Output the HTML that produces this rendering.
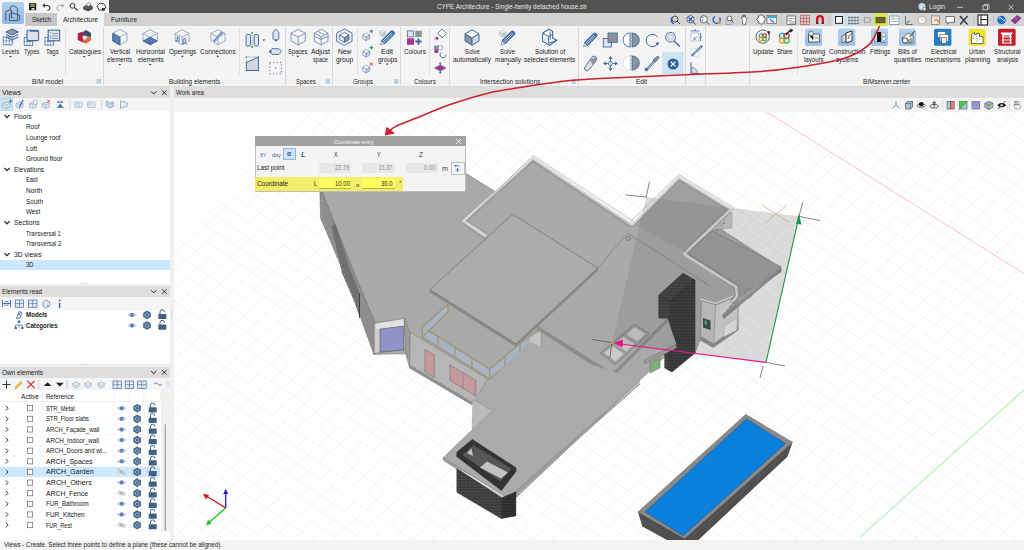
<!DOCTYPE html>
<html><head><meta charset="utf-8">
<style>
*{margin:0;padding:0;box-sizing:border-box}
html,body{width:1024px;height:550px;overflow:hidden;background:#f0f0f0;font-family:"Liberation Sans",sans-serif;font-size:7px;color:#222}
.a{position:absolute}
.t{position:absolute;white-space:nowrap;line-height:10px;height:10px;font-size:7px;color:#1c1c1c}
svg{position:absolute;overflow:visible}
</style></head><body>
<!-- TITLE -->
<div class="a" style="left:0;top:0;width:1024px;height:13.5px;background:#525252"></div>
<div class="a" style="left:0;top:0;width:26px;height:27px;background:#f6f6f6;border-right:1px solid #d6d6d6"></div>
<div class="a" style="left:2px;top:2px;width:22px;height:22px;background:linear-gradient(#b3d0ef,#8fb8e6);border-radius:2px"></div>
<div class="a" style="left:25px;top:0;width:84px;height:13px;background:#f4f4f4"></div>
<div class="t" style="left: 437px; top: 2px; color: rgb(230, 230, 230); transform: scaleX(0.905); transform-origin: left center;">CYPE Architecture - Single-family detached house.str</div>
<div class="t" style="left: 929px; top: 2px; color: rgb(230, 230, 230); font-size: 7.5px; transform: scaleX(0.871); transform-origin: left center;">Login</div>
<!-- TABS -->
<div class="a" style="left:25px;top:13px;width:999px;height:13px;background:#d3d3d3"></div>
<div class="a" style="left:26px;top:13px;width:31px;height:13px;background:#c6c6c6"></div>
<div class="a" style="left:57px;top:13px;width:47px;height:14px;background:#f4f4f4"></div>
<div class="t" style="left: 31.5px; top: 15px; transform: scaleX(0.888); transform-origin: left center;">Sketch</div>
<div class="t" style="left: 63px; top: 15px; transform: scaleX(0.937); transform-origin: left center;">Architecture</div>
<div class="t" style="left: 110.5px; top: 15px; transform: scaleX(0.928); transform-origin: left center;">Furniture</div>
<!--CHROME_SVG--><svg style="left:0;top:0" width="1024" height="30"><path d="M5.8,20.5 V11.5 L10.3,9.8 V7 Q12.8,4.3 15.5,7 L17.6,8.5 V14.5 L19.6,15.5 V20.5 M9.4,20.5 V14.3 L12.5,13 L17.6,14.5 M9.4,20.5 H17.6 V14.5 M11.4,10.5 V17.5 H13.2 M10.3,9.8 L12.6,11.3" fill="none" stroke="#353a42" stroke-width="0.75" stroke-linejoin="round"></path><rect x="29" y="3.2" width="7.2" height="7" fill="#1b1b1b"></rect><rect x="30.3" y="4" width="4.6" height="3" fill="#8a8a3a"></rect><rect x="31.5" y="8" width="3" height="1.8" fill="#ddd"></rect><path d="M43.5,5.5 h3.5 q3,0 3,2.5 q0,2.3 -2.5,2.3" fill="none" stroke="#222" stroke-width="1"></path><path d="M42.3,5.5 L45,3.3 L45,7.7 Z" fill="#222"></path><path d="M63.3,5.5 h-3.5 q-3,0 -3,2.5 q0,2.3 2.5,2.3" fill="none" stroke="#aaa" stroke-width="1"></path><path d="M64.5,5.5 L61.8,3.3 L61.8,7.7 Z" fill="#aaa"></path><circle cx="72.5" cy="5.8" r="2.4" fill="none" stroke="#222" stroke-width="0.9"></circle><path d="M74.3,7.6 L77.8,10.3" stroke="#222" stroke-width="1.1"></path><path d="M83.5,7 L88,4.5 L92.3,6.5 L92.3,9 L88,11 L83.5,9 Z" fill="#555" stroke="#222" stroke-width="0.6"></path><path d="M86,5 L89,2.5 L91,4 L88.5,6.5 Z" fill="#fff" stroke="#333" stroke-width="0.5"></path><circle cx="86.5" cy="6.8" r="0.7" fill="#3a3"></circle><circle cx="88" cy="6.5" r="0.7" fill="#d33"></circle><path d="M97,6 L100,3 L104,4 L106,7 L104,10 L99,10 Z" fill="#fff" stroke="#222" stroke-width="0.9"></path><path d="M102,8 L105,8 L105,10.5 L102,10.5 Z" fill="#333"></path><circle cx="922" cy="6.6" r="3.6" fill="#b9d3ea"></circle><path d="M920,4.5 q2,1 1,3 q2,0 3,2" stroke="#fff" stroke-width="0.7" fill="none"></path><circle cx="924.4" cy="9" r="1.8" fill="#ddd" stroke="#4b4b4b" stroke-width="0.5"></circle><path d="M957,7.3 h6" stroke="#ddd" stroke-width="0.8"></path><rect x="983" y="5.3" width="4.6" height="4.4" fill="none" stroke="#ddd" stroke-width="0.8"></rect><path d="M984.5,5.3 v-1 h4.5 v4.5 h-1.3" fill="none" stroke="#ddd" stroke-width="0.7"></path><path d="M1008.5,4.8 l5,4.9 M1013.5,4.8 l-5,4.9" stroke="#e6e6e6" stroke-width="0.8"></path><rect x="832.6" y="13.5" width="12.699999999999932" height="12.5" fill="#d5e6f5"></rect><rect x="847" y="13.5" width="12.5" height="12.5" fill="#d5e6f5"></rect><rect x="874" y="13.5" width="13" height="12.5" fill="#d6e64a"></rect><rect x="888" y="13.5" width="12.5" height="12.5" fill="#d5e6f5"></rect><line x1="781" y1="14.5" x2="781" y2="25" stroke="#bdbdbd" stroke-width="0.7"></line><line x1="829.3" y1="14.5" x2="829.3" y2="25" stroke="#bdbdbd" stroke-width="0.7"></line><line x1="974" y1="14.5" x2="974" y2="25" stroke="#bdbdbd" stroke-width="0.7"></line><line x1="993.6" y1="14.5" x2="993.6" y2="25" stroke="#bdbdbd" stroke-width="0.7"></line><circle cx="675" cy="19" r="3" fill="none" stroke="#444" stroke-width="0.9"></circle><path d="M677,21 l3,3" stroke="#444" stroke-width="1"></path><path d="M671.5,17.5 q-1,5 2.5,6.5" stroke="#1f4fd8" stroke-width="1.3" fill="none"></path><circle cx="690.5" cy="19.3" r="3.6" fill="#fff" stroke="#444" stroke-width="0.8"></circle><path d="M688.5,17.3 l4,4 M692.5,17.3 l-4,4" stroke="#1f4fd8" stroke-width="1.4"></path><path d="M693,22 l2.5,2.5" stroke="#444" stroke-width="1"></path><circle cx="703.8" cy="19.3" r="3.6" fill="#fff" stroke="#444" stroke-width="0.8"></circle><text x="701.2" y="21.3" font-size="4.5" fill="#1f4fd8" font-family="Liberation Sans">2</text><path d="M706.5,22 l2.5,2.5" stroke="#444" stroke-width="1"></path><path d="M715,16.5 a3.6,3.6 0 1 0 4.5,1" fill="none" stroke="#1f4fd8" stroke-width="1.3"></path><circle cx="719.5" cy="22.5" r="1.6" fill="#e0a020"></circle><rect x="726" y="19" width="6" height="5.5" fill="none" stroke="#7a8fd0" stroke-width="0.6"></rect><circle cx="729.5" cy="18.5" r="2.4" fill="#fff" stroke="#444" stroke-width="0.8"></circle><path d="M731,20 l2.5,2.5" stroke="#444" stroke-width="1"></path><path d="M742.5,24 v-4 l-1,-2 v-1 l1,0.5 v-2.5 h1 v2 h1 v-2 h1 v2.5 h1 v3.5 l-1,1.5 v2 z" fill="#fff" stroke="#555" stroke-width="0.7"></path><path d="M756.3,19.5 l2,-1.5 v-2 h1.5 l1.5,-1.5 l1.5,1.5 h1.5 v2 l2,1.5 l-2,1.5 v2 h-1.5 l-1.5,1.5 l-1.5,-1.5 h-1.5 v-2 z" fill="#fff" stroke="#444" stroke-width="0.8"></path><rect x="767" y="15.5" width="9.5" height="8" fill="#fff" stroke="#444" stroke-width="0.6"></rect><rect x="767.5" y="16" width="8.5" height="2.3" fill="#39b0d8"></rect><path d="M770,19.5 l4,3" stroke="#1f4fd8" stroke-width="1.2"></path><rect x="787" y="16" width="8.5" height="8.5" fill="#fff" stroke="#444" stroke-width="0.7"></rect><path d="M788,18.5 h6.5 M788,20.5 h3" stroke="#444" stroke-width="0.5"></path><text x="789.5" y="23.8" font-size="3.5" fill="#333" font-family="Liberation Sans">DG</text><rect x="800.5" y="15.5" width="9" height="9" fill="none" stroke="#a33" stroke-width="0.8" stroke-dasharray="1.3,0.7"></rect><path d="M800.5,18.5 h9 M800.5,21.5 h9 M803.5,15.5 v9 M806.5,15.5 v9" stroke="#c33" stroke-width="0.6"></path><path d="M816,24 v-5 a4,4 0 0 1 8,0 v5 h-2.3 v-5 a1.7,1.7 0 0 0 -3.4,0 v5 z" fill="#c8161e"></path><rect x="816" y="22.5" width="2.3" height="1.5" fill="#333"></rect><rect x="821.7" y="22.5" width="2.3" height="1.5" fill="#333"></rect><rect x="835.5" y="16.5" width="7" height="6.8" fill="#fff" stroke="#222" stroke-width="1"></rect><path d="M849,16 v9 M852,16 v9 M855,16 v9 M858,16 v9 M848,17.5 h11 M848,20.5 h11 M848,23.5 h11" stroke="#555" stroke-width="0.6"></path><rect x="864.5" y="17.5" width="5.5" height="5" fill="none" stroke="#888" stroke-width="0.6"></rect><path d="M863,20 h1.5 M870,20 h1.5" stroke="#888" stroke-width="0.6"></path><rect x="876" y="17.3" width="9" height="5.5" fill="#7a7a20" stroke="#333" stroke-width="0.7"></rect><path d="M877,19 h7 M877,21 h7" stroke="#222" stroke-width="0.4"></path><rect x="889.5" y="16" width="9.5" height="8.5" fill="#fff" stroke="#666" stroke-width="0.6"></rect><path d="M890.5,19 h7.5 M890.5,21.5 h7.5 M893,16.5 v3" stroke="#666" stroke-width="0.5"></path><path d="M905.5,16 v8.5 h7 M905.5,24.5 l0,0 M907,24 a3,3 0 0 1 3,-3" fill="none" stroke="#555" stroke-width="0.8"></path><circle cx="922" cy="20" r="3.8" fill="#fff" stroke="#999" stroke-width="0.7"></circle><path d="M922,17.5 v2.5 h2" stroke="#999" stroke-width="0.6" fill="none"></path><rect x="931.5" y="15.5" width="8" height="9" fill="#f7e6d6" stroke="#777" stroke-width="0.7"></rect><rect x="932" y="15.5" width="7" height="2" fill="#ccc"></rect><path d="M934,20 h4 v3" stroke="#e36a2a" stroke-width="1" fill="none"></path><path d="M946,16.5 h8.5 v6 h-5 l-2,2 v-2 h-1.5 z" fill="#fff" stroke="#555" stroke-width="0.8"></path><path d="M960,16 l7.5,8.5 M967.5,16 l-7.5,8.5" stroke="#333" stroke-width="1.3"></path><path d="M959.5,16 l2,0 l-1,1.5 z" fill="#333"></path><rect x="978" y="15" width="9.5" height="10" fill="#fff" stroke="#222" stroke-width="1.1"></rect><path d="M981,15 v10 M981,19.5 h6.5" stroke="#222" stroke-width="1.1"></path><path d="M988,20 h1.5" stroke="#999" stroke-width="0.6"></path><circle cx="1001.5" cy="20" r="4.3" fill="#1f6fd0"></circle><path d="M999,18 q2,-1 3,1 q1,2 3,1" stroke="#fff" stroke-width="1" fill="none"></path><path d="M1006.5,20 h1" stroke="#999" stroke-width="0.6"></path><path d="M1011,21 L1017,15.5 L1021,18 L1015,24 Z" fill="#8a3aa0" stroke="#5a2070" stroke-width="0.6"></path><path d="M1011,21 L1015,24 L1015,25 L1011,22 Z" fill="#ddd"></path><path d="M1015,18 l2,1" stroke="#e8c21a" stroke-width="0.8"></path></svg>
<!-- RIBBON -->
<div class="a" style="left:0;top:26px;width:1024px;height:61px;background:#f4f4f4;border-bottom:1px solid #d9d9d9"></div>
<div class="t" style="left: 1.9px; top: 47px; transform: scaleX(0.845); transform-origin: left center;">Levels</div>
<div class="t" style="left: 23.5px; top: 47px; transform: scaleX(0.813); transform-origin: left center;">Types</div>
<div class="t" style="left: 45.7px; top: 47px; transform: scaleX(0.858); transform-origin: left center;">Tags</div>
<div class="t" style="left: 68.5px; top: 47px; transform: scaleX(0.898); transform-origin: left center;">Catalogues</div>
<div class="t" style="left: 31.7px; top: 77px; transform: scaleX(0.929); transform-origin: left center;">BIM model</div>
<div class="t" style="left: 109.7px; top: 47px; transform: scaleX(0.871); transform-origin: left center;">Vertical</div>
<div class="t" style="left: 107px; top: 55px; transform: scaleX(0.88); transform-origin: left center;">elements</div>
<div class="t" style="left: 136px; top: 47px; transform: scaleX(0.92); transform-origin: left center;">Horizontal</div>
<div class="t" style="left: 137.5px; top: 55px; transform: scaleX(0.908); transform-origin: left center;">elements</div>
<div class="t" style="left: 168.7px; top: 47px; transform: scaleX(0.911); transform-origin: left center;">Openings</div>
<div class="t" style="left: 200px; top: 47px; transform: scaleX(0.915); transform-origin: left center;">Connections</div>
<div class="t" style="left: 168.7px; top: 77px; transform: scaleX(0.928); transform-origin: left center;">Building elements</div>
<div class="t" style="left: 288px; top: 47px; transform: scaleX(0.835); transform-origin: left center;">Spaces</div>
<div class="t" style="left: 311px; top: 47px; transform: scaleX(0.976); transform-origin: left center;">Adjust</div>
<div class="t" style="left: 313px; top: 55px; transform: scaleX(0.803); transform-origin: left center;">space</div>
<div class="t" style="left: 295.5px; top: 77px; transform: scaleX(0.848); transform-origin: left center;">Spaces</div>
<div class="t" style="left: 337.5px; top: 47px; transform: scaleX(0.963); transform-origin: left center;">New</div>
<div class="t" style="left: 335.6px; top: 55px; transform: scaleX(0.972); transform-origin: left center;">group</div>
<div class="t" style="left: 381px; top: 47px; transform: scaleX(0.995); transform-origin: left center;">Edit</div>
<div class="t" style="left: 377.5px; top: 55px; transform: scaleX(0.911); transform-origin: left center;">groups</div>
<div class="t" style="left: 352.8px; top: 77px; transform: scaleX(0.879); transform-origin: left center;">Groups</div>
<div class="t" style="left: 403.8px; top: 47px; transform: scaleX(0.904); transform-origin: left center;">Colours</div>
<div class="t" style="left: 413.8px; top: 77px; transform: scaleX(0.904); transform-origin: left center;">Colours</div>
<div class="t" style="left: 464.7px; top: 47px; transform: scaleX(0.839); transform-origin: left center;">Solve</div>
<div class="t" style="left: 452.8px; top: 55px; transform: scaleX(0.93); transform-origin: left center;">automatically</div>
<div class="t" style="left: 500px; top: 47px; transform: scaleX(0.856); transform-origin: left center;">Solve</div>
<div class="t" style="left: 495px; top: 55px; transform: scaleX(0.928); transform-origin: left center;">manually</div>
<div class="t" style="left: 479.8px; top: 77px; transform: scaleX(0.915); transform-origin: left center;">Intersection solutions</div>
<div class="t" style="left: 534.7px; top: 47px; transform: scaleX(0.916); transform-origin: left center;">Solution of</div>
<div class="t" style="left: 524px; top: 55px; transform: scaleX(0.909); transform-origin: left center;">selected elements</div>
<div class="t" style="left: 636px; top: 77px; transform: scaleX(0.912); transform-origin: left center;">Edit</div>
<div class="t" style="left: 752.6px; top: 47px; transform: scaleX(0.904); transform-origin: left center;">Update</div>
<div class="t" style="left: 777px; top: 47px; transform: scaleX(0.829); transform-origin: left center;">Share</div>
<div class="t" style="left: 801.6px; top: 47px; transform: scaleX(0.911); transform-origin: left center;">Drawing</div>
<div class="t" style="left: 803.5px; top: 55px; transform: scaleX(0.879); transform-origin: left center;">layouts</div>
<div class="t" style="left: 829px; top: 47px; transform: scaleX(0.926); transform-origin: left center;">Construction</div>
<div class="t" style="left: 835.6px; top: 55px; transform: scaleX(0.873); transform-origin: left center;">systems</div>
<div class="t" style="left: 869.5px; top: 47px; transform: scaleX(0.909); transform-origin: left center;">Fittings</div>
<div class="t" style="left: 897.8px; top: 47px; transform: scaleX(0.912); transform-origin: left center;">Bills of</div>
<div class="t" style="left: 893.8px; top: 55px; transform: scaleX(0.921); transform-origin: left center;">quantities</div>
<div class="t" style="left: 930.5px; top: 47px; transform: scaleX(0.898); transform-origin: left center;">Electrical</div>
<div class="t" style="left: 925.4px; top: 55px; transform: scaleX(0.906); transform-origin: left center;">mechanisms</div>
<div class="t" style="left: 969px; top: 47px; transform: scaleX(0.839); transform-origin: left center;">Urban</div>
<div class="t" style="left: 964.6px; top: 55px; transform: scaleX(0.952); transform-origin: left center;">planning</div>
<div class="t" style="left: 993.8px; top: 47px; transform: scaleX(0.891); transform-origin: left center;">Structural</div>
<div class="t" style="left: 996.7px; top: 55px; transform: scaleX(0.842); transform-origin: left center;">analysis</div>
<div class="t" style="left: 862.6px; top: 77px; transform: scaleX(0.896); transform-origin: left center;">BIMserver.center</div>
<!--RIBBON_SVG--><svg style="left:0;top:0" width="1024" height="86"><line x1="103.5" y1="27" x2="103.5" y2="85" stroke="#d9d9d9" stroke-width="1"></line><line x1="285.5" y1="27" x2="285.5" y2="85" stroke="#d9d9d9" stroke-width="1"></line><line x1="332.5" y1="27" x2="332.5" y2="85" stroke="#d9d9d9" stroke-width="1"></line><line x1="400.5" y1="27" x2="400.5" y2="85" stroke="#d9d9d9" stroke-width="1"></line><line x1="449.5" y1="27" x2="449.5" y2="85" stroke="#d9d9d9" stroke-width="1"></line><line x1="578.5" y1="27" x2="578.5" y2="85" stroke="#d9d9d9" stroke-width="1"></line><line x1="685.5" y1="27" x2="685.5" y2="85" stroke="#d9d9d9" stroke-width="1"></line><line x1="705.5" y1="27" x2="705.5" y2="85" stroke="#d9d9d9" stroke-width="1"></line><line x1="749.5" y1="27" x2="749.5" y2="85" stroke="#d9d9d9" stroke-width="1"></line><line x1="65.5" y1="28" x2="65.5" y2="75" stroke="#e0e0e0" stroke-width="1"></line><line x1="239.5" y1="28" x2="239.5" y2="75" stroke="#e0e0e0" stroke-width="1"></line><line x1="357.5" y1="28" x2="357.5" y2="75" stroke="#e0e0e0" stroke-width="1"></line><line x1="429.5" y1="28" x2="429.5" y2="75" stroke="#e0e0e0" stroke-width="1"></line><line x1="797.5" y1="28" x2="797.5" y2="75" stroke="#e0e0e0" stroke-width="1"></line><rect x="96.5" y="79.2" width="4.5" height="4.5" fill="#b9cde3"></rect><rect x="325.6" y="79.2" width="4.5" height="4.5" fill="#b9cde3"></rect><rect x="394" y="79.2" width="4.5" height="4.5" fill="#b9cde3"></rect><rect x="571.4" y="79.2" width="4.5" height="4.5" fill="#b9cde3"></rect><polygon points="9.0,56.0 12.0,56.0 10.5,57.6" fill="#444"></polygon><polygon points="82.7,56.0 85.7,56.0 84.2,57.6" fill="#444"></polygon><polygon points="118.2,63.89999999999999 121.2,63.89999999999999 119.7,65.5" fill="#444"></polygon><polygon points="148.7,63.89999999999999 151.7,63.89999999999999 150.2,65.5" fill="#444"></polygon><polygon points="180.9,55.8 183.9,55.8 182.4,57.4" fill="#444"></polygon><polygon points="216.3,55.8 219.3,55.8 217.8,57.4" fill="#444"></polygon><polygon points="296.2,55.8 299.2,55.8 297.7,57.4" fill="#444"></polygon><polygon points="385.7,63.599999999999994 388.7,63.599999999999994 387.2,65.2" fill="#444"></polygon><polygon points="506.5,63.599999999999994 509.5,63.599999999999994 508,65.2" fill="#444"></polygon><polygon points="262.3,39.5 265.3,39.5 263.8,41.1" fill="#444"></polygon><rect x="3.2" y="37" width="9" height="7.8" fill="#fff" stroke="#3e6aa3" stroke-width="0.8"></rect><line x1="6.2" y1="37" x2="6.2" y2="44.8" stroke="#3e6aa3" stroke-width="0.6"></line><line x1="9.2" y1="37" x2="9.2" y2="44.8" stroke="#3e6aa3" stroke-width="0.6"></line><line x1="3.2" y1="40.9" x2="12.2" y2="40.9" stroke="#3e6aa3" stroke-width="0.6"></line><path d="M12.2,29.1 L18.2,32 L12.2,35 L6.2,32 Z" fill="#9a9a9a" stroke="#3e6aa3" stroke-width="1.1"></path><path d="M6.2,34.5 L12.2,37.5 L18.2,34.5 M6.2,37 L12.2,40 L18.2,37" fill="none" stroke="#3e6aa3" stroke-width="1.1"></path><rect x="24.2" y="37.5" width="8.5" height="8" fill="#fff" stroke="#3e6aa3" stroke-width="0.8"></rect><line x1="27.03333333333333" y1="37.5" x2="27.03333333333333" y2="45.5" stroke="#3e6aa3" stroke-width="0.6"></line><line x1="29.866666666666667" y1="37.5" x2="29.866666666666667" y2="45.5" stroke="#3e6aa3" stroke-width="0.6"></line><line x1="24.2" y1="41.5" x2="32.7" y2="41.5" stroke="#3e6aa3" stroke-width="0.6"></line><rect x="27" y="30.2" width="11.6" height="10.4" rx="1.3" fill="#dde2ea" stroke="#3e6aa3" stroke-width="1.1"></rect><rect x="30" y="30.2" width="8.6" height="1.6" fill="#3e6aa3"></rect><rect x="45" y="37.3" width="8.7" height="7.8" fill="#fff" stroke="#3e6aa3" stroke-width="0.8"></rect><line x1="47.9" y1="37.3" x2="47.9" y2="45.099999999999994" stroke="#3e6aa3" stroke-width="0.6"></line><line x1="50.8" y1="37.3" x2="50.8" y2="45.099999999999994" stroke="#3e6aa3" stroke-width="0.6"></line><line x1="45" y1="41.199999999999996" x2="53.7" y2="41.199999999999996" stroke="#3e6aa3" stroke-width="0.6"></line><rect x="48.2" y="30.2" width="11.4" height="10.6" fill="#e3e7ee" stroke="#3e6aa3" stroke-width="1.1"></rect><path d="M50,32.5 h1 M52,33.5 h6 M52,36 h6 M52,38.5 h6 M50.5,35 v4" stroke="#3e6aa3" stroke-width="0.6"></path><path d="M81,33.2 L86,30 L91,33 L91,37 L86,36.5 L82.8,35.5 Z" fill="#3c4968"></path><path d="M77.8,33.5 L81.5,31.8 L82.8,35 L82.8,42.5 L77.8,40 Z" fill="#b7193f"></path><path d="M83,42.5 L83,39 L86.5,37.3 L91,37.3 L91,40.5 L86,43.8 Z" fill="#d86f3b"></path><circle cx="84.8" cy="37.6" r="2.1" fill="#e6e6e6"></circle><path d="M119.89999999999999,29.4 L127.0,33.3 L127.0,41.1 L119.89999999999999,45.0 L112.8,41.1 L112.8,33.3 Z M112.8,33.3 L119.89999999999999,37.199999999999996 L127.0,33.3 M119.89999999999999,37.199999999999996 L119.89999999999999,45.0" fill="none" stroke="#5b80b3" stroke-width="0.6"></path><path d="M112.8,33.3 L119.89999999999999,37.199999999999996 L119.89999999999999,45.0 L112.8,41.099999999999994 Z" fill="#4a70a5" stroke="#3e6aa3" stroke-width="0.9"></path><path d="M113.8,35.4 L118.8,42.4 M115.8,35.4 L118.8,39.4 M113.8,38.4 L116.8,42.4" stroke="#9fb6d6" stroke-width="0.5"></path><path d="M150.2,29.7 L157.4,33.45 L157.4,40.95 L150.2,44.7 L143,40.95 L143,33.45 Z M143,33.45 L150.2,37.2 L157.4,33.45 M150.2,37.2 L150.2,44.7" fill="none" stroke="#5b80b3" stroke-width="0.6"></path><path d="M143,40.9 L150.2,37.2 L157.4,40.9 L150.2,44.7 Z" fill="#4a70a5" stroke="#3e6aa3" stroke-width="0.8"></path><path d="M147,40.2 L149,42.7 M150,39.2 L152,42.2 M153,40.2 L154,41.7" stroke="#a9bcd9" stroke-width="0.5"></path><path d="M182.2,29.7 L189.2,33.45 L189.2,40.95 L182.2,44.7 L175.2,40.95 L175.2,33.45 Z M175.2,33.45 L182.2,37.2 L189.2,33.45 M182.2,37.2 L182.2,44.7" fill="none" stroke="#5b80b3" stroke-width="0.6"></path><path d="M177.2,36.7 v4 l2,1 v-4 z M185.2,38.2 v5 l-2,1 v-5 z M176.7,40.2 l-1,1.5 M185.7,43.2 l1.5,1.5" fill="none" stroke="#3e6aa3" stroke-width="0.9"></path><path d="M218.0,29.7 L225.1,33.45 L225.1,40.95 L218.0,44.7 L210.9,40.95 L210.9,33.45 Z M210.9,33.45 L218.0,37.2 L225.1,33.45 M218.0,37.2 L218.0,44.7" fill="none" stroke="#5b80b3" stroke-width="0.6"></path><path d="M212.9,40.7 L221.4,31.2 L223.4,32.7 L214.9,42.2 Z" fill="#5a7fb2"></path><path d="M213.9,40.2 L221.9,31.7 M214.9,41.2 L222.9,32.7" stroke="#fff" stroke-width="0.4"></path><rect x="246.1" y="34.5" width="4.3" height="11.4" rx="1" fill="#e3e7ee" stroke="#3e6aa3" stroke-width="1"></rect><rect x="254.2" y="34.5" width="4.3" height="11.4" rx="1" fill="#e3e7ee" stroke="#3e6aa3" stroke-width="1"></rect><line x1="252.2" y1="33" x2="252.2" y2="47" stroke="#3e6aa3" stroke-width="0.6" stroke-dasharray="1,0.8"></line><circle cx="252.2" cy="32.8" r="0.9" fill="#3a9a3a"></circle><circle cx="252.2" cy="47" r="0.9" fill="#3a9a3a"></circle><path d="M246.4,62.5 L258.4,57 L258.4,70.5 L246.4,70.5 Z" fill="#d2d8e2" stroke="#3e6aa3" stroke-width="1"></path><path d="M246.4,57 L258.4,57 M246.4,57 L246.4,62.5" stroke="#3e6aa3" stroke-width="0.6" stroke-dasharray="1,0.7"></path><circle cx="246.4" cy="57" r="0.8" fill="#3a9a3a"></circle><circle cx="258.4" cy="57" r="0.8" fill="#3a9a3a"></circle><circle cx="246.4" cy="62.5" r="0.8" fill="#3a9a3a"></circle><circle cx="246.4" cy="70.5" r="0.8" fill="#3a9a3a"></circle><circle cx="258.4" cy="70.5" r="0.8" fill="#3a9a3a"></circle><path d="M275.9,29.3 L278.8,32 L278.8,39 L275.9,41.1 L273,39 L273,32 Z" fill="#dfe4ec" stroke="#3e6aa3" stroke-width="0.9"></path><circle cx="275.9" cy="40" r="1.1" fill="#3e6aa3"></circle><path d="M269.3,51.5 L272,48.7 L279,48.7 L281.6,51.5 L279,54.4 L272,54.4 Z" fill="#dfe4ec" stroke="#3e6aa3" stroke-width="0.9"></path><circle cx="270.5" cy="51.5" r="1.2" fill="#3e6aa3"></circle><rect x="269.8" y="62.5" width="11.8" height="11.3" fill="none" stroke="#3e6aa3" stroke-width="0.9" stroke-dasharray="1.2,2.2"></rect><circle cx="275.7" cy="68" r="0.7" fill="#3e6aa3"></circle><path d="M298.15,29.3 L305.3,33.2 L305.3,41.0 L298.15,44.9 L291,41.0 L291,33.2 Z M291,33.2 L298.15,37.1 L305.3,33.2 M298.15,37.1 L298.15,44.9" fill="none" stroke="#5b80b3" stroke-width="0.8"></path><path d="M321.15000000000003,29.3 L328.0,33.2 L328.0,41.0 L321.15000000000003,44.9 L314.3,41.0 L314.3,33.2 Z M314.3,33.2 L321.15000000000003,37.1 L328.0,33.2 M321.15000000000003,37.1 L321.15000000000003,44.9" fill="none" stroke="#5b80b3" stroke-width="0.8"></path><path d="M314.8,36.5 L321,39.5 L327.5,36.5 M318,31.5 L324,34.5" stroke="#5b80b3" stroke-width="0.8" fill="none"></path><path d="M344.4,29 L352,33 L352,41.4 L344.4,45.3 L336.7,41.4 L336.7,33 Z" fill="#eef1f5" stroke="#3e6aa3" stroke-width="0.9"></path><polygon points="344.40000000000003,32.3 349.0,35.032399999999996 344.40000000000003,37.764799999999994 339.8,35.032399999999996" fill="#fff" stroke="#3e6aa3" stroke-width="0.9" stroke-linejoin="round"></polygon><polygon points="339.8,35.032399999999996 344.40000000000003,37.764799999999994 344.40000000000003,42.419999999999995 339.8,39.687599999999996" fill="#fff" stroke="#3e6aa3" stroke-width="0.9" stroke-linejoin="round"></polygon><polygon points="344.40000000000003,37.764799999999994 349.0,35.032399999999996 349.0,39.687599999999996 344.40000000000003,42.419999999999995" fill="#8e9299" stroke="#3e6aa3" stroke-width="0.9" stroke-linejoin="round"></polygon><polygon points="366.2,33 369.7,35.079 366.2,37.158 362.7,35.079" fill="#fff" stroke="#6f8fbd" stroke-width="0.7" stroke-linejoin="round"></polygon><polygon points="362.7,35.079 366.2,37.158 366.2,40.7 362.7,38.621" fill="#f3f5f8" stroke="#6f8fbd" stroke-width="0.7" stroke-linejoin="round"></polygon><polygon points="366.2,37.158 369.7,35.079 369.7,38.621 366.2,40.7" fill="#c9d1dd" stroke="#6f8fbd" stroke-width="0.7" stroke-linejoin="round"></polygon><polygon points="366.2,49.4 369.7,51.479 366.2,53.558 362.7,51.479" fill="#fff" stroke="#6f8fbd" stroke-width="0.7" stroke-linejoin="round"></polygon><polygon points="362.7,51.479 366.2,53.558 366.2,57.1 362.7,55.021" fill="#f3f5f8" stroke="#6f8fbd" stroke-width="0.7" stroke-linejoin="round"></polygon><polygon points="366.2,53.558 369.7,51.479 369.7,55.021 366.2,57.1" fill="#c9d1dd" stroke="#6f8fbd" stroke-width="0.7" stroke-linejoin="round"></polygon><polygon points="366.2,65.3 369.7,67.37899999999999 366.2,69.458 362.7,67.37899999999999" fill="#fff" stroke="#6f8fbd" stroke-width="0.7" stroke-linejoin="round"></polygon><polygon points="362.7,67.37899999999999 366.2,69.458 366.2,73.0 362.7,70.92099999999999" fill="#f3f5f8" stroke="#6f8fbd" stroke-width="0.7" stroke-linejoin="round"></polygon><polygon points="366.2,69.458 369.7,67.37899999999999 369.7,70.92099999999999 366.2,73.0" fill="#c9d1dd" stroke="#6f8fbd" stroke-width="0.7" stroke-linejoin="round"></polygon><path d="M371.3,29.5 v3.6 M369.5,31.3 h3.6 M370,30 l2.6,2.6 M372.6,30 l-2.6,2.6" stroke="#3e6aa3" stroke-width="0.7"></path><path d="M371.4,45.8 v3.8 M369.5,47.7 h3.8" stroke="#2faa3a" stroke-width="1.3"></path><path d="M369.9,62.5 l3,3 M372.9,62.5 l-3,3" stroke="#d9262e" stroke-width="1"></path><polygon points="382.5,30 385.5,31.782 382.5,33.564 379.5,31.782" fill="#eee" stroke="#b7bcc4" stroke-width="0.6" stroke-linejoin="round"></polygon><polygon points="379.5,31.782 382.5,33.564 382.5,36.6 379.5,34.818" fill="#ddd" stroke="#b7bcc4" stroke-width="0.6" stroke-linejoin="round"></polygon><polygon points="382.5,33.564 385.5,31.782 385.5,34.818 382.5,36.6" fill="#c6c6c6" stroke="#b7bcc4" stroke-width="0.6" stroke-linejoin="round"></polygon><g transform="translate(379.5,29.8) scale(1.0)"><path d="M0.8,15.2 L2,10.2 L11.2,1 Q12.6,-0.2 14,1.1 L15,2 Q16.2,3.4 15,4.8 L5.8,14 Z" fill="#3e6aa3"></path><path d="M3.2,11.6 L12,2.8 M4.4,12.8 L13.2,4" stroke="#f4f4f4" stroke-width="0.8"></path><path d="M1.6,14.4 L2.3,11.6 L4.4,13.7 Z" fill="#f4f4f4"></path></g><rect x="407.3" y="30.9" width="6.3" height="6" fill="#dfe3ea" stroke="#3e6aa3" stroke-width="0.8"></rect><rect x="415.2" y="30.7" width="6.6" height="6.4" fill="#8e9299"></rect><rect x="407" y="38.3" width="7" height="6.5" fill="#a8358f"></rect><path d="M418.5,38.5 v6.3 M415.3,41.6 h6.4" stroke="#3e6aa3" stroke-width="2"></path><path d="M438,33 L442,29 L446.3,33.5 L442,38 Z" fill="#fff" stroke="#3e6aa3" stroke-width="0.8"></path><path d="M434.5,35 h4 v5.5 h-4 z" fill="#fff" stroke="#cdd3dc" stroke-width="0.5"></path><circle cx="436.8" cy="38.3" r="1.5" fill="#a8358f"></circle><rect x="434.5" y="46" width="3.8" height="3.5" fill="#8e9299" stroke="#3e6aa3" stroke-width="0.5"></rect><rect x="438.4" y="46" width="3.8" height="3.5" fill="#fff" stroke="#3e6aa3" stroke-width="0.5"></rect><rect x="434.5" y="49.5" width="3.8" height="3.5" fill="#a8358f"></rect><path d="M441,52.5 a3,3 0 1 0 5,2.5" fill="none" stroke="#3e6aa3" stroke-width="1"></path><path d="M440.3,63 v10" stroke="#3e6aa3" stroke-width="0.8"></path><path d="M434.5,68 L440.3,65 L446,68 L440.3,71 Z" fill="#a8358f" stroke="#3e6aa3" stroke-width="0.6"></path><circle cx="440.3" cy="63.5" r="1" fill="#3e6aa3"></circle><circle cx="440.3" cy="72.5" r="1" fill="#3e6aa3"></circle><polygon points="472.0,29.75 479,33.908 472.0,38.066 465,33.908" fill="#fff" stroke="#3e6aa3" stroke-width="1" stroke-linejoin="round"></polygon><polygon points="465,33.908 472.0,38.066 472.0,45.150000000000006 465,40.992000000000004" fill="#8e9299" stroke="#3e6aa3" stroke-width="1" stroke-linejoin="round"></polygon><polygon points="472.0,38.066 479,33.908 479,40.992000000000004 472.0,45.150000000000006" fill="#d5d9e0" stroke="#3e6aa3" stroke-width="1" stroke-linejoin="round"></polygon><polygon points="502.75,30 506.0,31.930500000000002 502.75,33.861000000000004 499.5,31.930500000000002" fill="#f2f2f2" stroke="#b9bec6" stroke-width="0.6" stroke-linejoin="round"></polygon><polygon points="499.5,31.930500000000002 502.75,33.861000000000004 502.75,37.15 499.5,35.2195" fill="#ddd" stroke="#b9bec6" stroke-width="0.6" stroke-linejoin="round"></polygon><polygon points="502.75,33.861000000000004 506.0,31.930500000000002 506.0,35.2195 502.75,37.15" fill="#c8c8c8" stroke="#b9bec6" stroke-width="0.6" stroke-linejoin="round"></polygon><g transform="translate(500,30) scale(0.9875)"><path d="M0.8,15.2 L2,10.2 L11.2,1 Q12.6,-0.2 14,1.1 L15,2 Q16.2,3.4 15,4.8 L5.8,14 Z" fill="#3e6aa3"></path><path d="M3.2,11.6 L12,2.8 M4.4,12.8 L13.2,4" stroke="#f4f4f4" stroke-width="0.8"></path><path d="M1.6,14.4 L2.3,11.6 L4.4,13.7 Z" fill="#f4f4f4"></path></g><path d="M548.6,29.3 L552.6,31.3 L552.6,38.3 L557.0,40.3 L549.6,45.3 L542.6,41.3 L542.6,33.3 Z" fill="#fff" stroke="#3e6aa3" stroke-width="1.1" stroke-linejoin="round"></path><path d="M542.6,33.3 L548.6,36.3 L548.6,43.3 M548.6,36.3 L552.6,34.3 M548.6,43.3 L557.0,40.3 M550.1,31.8 v8" fill="none" stroke="#3e6aa3" stroke-width="1"></path><path d="M543.6,36.3 L547.6,38.3 L547.6,42.3 L543.6,40.3 Z" fill="#e6ebf2"></path><rect x="663" y="52.9" width="20" height="20.6" fill="#cfe3f6" stroke="#b5d3ef" stroke-width="0.6"></rect><g transform="translate(582.5,32.2) scale(0.96875)"><path d="M0.8,15.2 L2,10.2 L11.2,1 Q12.6,-0.2 14,1.1 L15,2 Q16.2,3.4 15,4.8 L5.8,14 Z" fill="#3e6aa3"></path><path d="M3.2,11.6 L12,2.8 M4.4,12.8 L13.2,4" stroke="#f4f4f4" stroke-width="0.8"></path><path d="M1.6,14.4 L2.3,11.6 L4.4,13.7 Z" fill="#f4f4f4"></path></g><rect x="603.3" y="38.5" width="8" height="8.5" fill="#dfe3ea" stroke="#3e6aa3" stroke-width="0.9"></rect><rect x="608" y="33" width="9.3" height="9.3" fill="#8e9299" stroke="#3e6aa3" stroke-width="0.9"></rect><path d="M630,33 a7,7 0 0 0 0,14 z" fill="#fff" stroke="#3e6aa3" stroke-width="0.9"></path><path d="M632.3,33 a7,7 0 0 1 0,14 z" fill="#8e9299" stroke="#3e6aa3" stroke-width="0.9"></path><line x1="631.2" y1="32" x2="631.2" y2="48" stroke="#3e6aa3" stroke-width="0.6" stroke-dasharray="1,0.6"></line><path d="M657.5,37 A6.2,6.2 0 1 0 658,43" fill="none" stroke="#3e6aa3" stroke-width="1"></path><path d="M655.5,42.5 L659.5,42.5 L657.5,46 Z" fill="#3e6aa3"></path><circle cx="670.6" cy="37.3" r="4.8" fill="#fff" stroke="#3e6aa3" stroke-width="1"></circle><circle cx="670.6" cy="37.3" r="3" fill="#e4e7ec" stroke="#8e9299" stroke-width="0.5"></circle><path d="M674,41 L679.8,46.5" stroke="#3e6aa3" stroke-width="1.6"></path><path d="M584.5,68 L592,57 Q594,55 596,57 Q597.5,59 596,61 L588.5,70.5 Q586.5,71.5 585,70 Z" fill="#dfe3ea" stroke="#3e6aa3" stroke-width="0.9"></path><path d="M590,60 L595.5,57 L596.5,60.5 L592.5,64.5 Z" fill="#8e9299"></path><path d="M610.5,56 L608.5,59 h4 z M610.5,71 L608.5,68 h4 z M603,63.5 L606,61.5 v4 z M618,63.5 L615,61.5 v4 z" fill="#3e6aa3"></path><path d="M610.5,58 v11 M605,63.5 h11" stroke="#3e6aa3" stroke-width="0.9"></path><circle cx="610.5" cy="63.5" r="2" fill="#e3e7ee" stroke="#3e6aa3" stroke-width="0.8"></circle><path d="M630,56 a7,7 0 0 0 0,14 z" fill="#fff" stroke="#9aaac2" stroke-width="0.6" stroke-dasharray="0.8,0.6"></path><path d="M632.3,56 a7,7 0 0 1 0,14 z" fill="#8e9299" stroke="#3e6aa3" stroke-width="0.9"></path><line x1="631.2" y1="55" x2="631.2" y2="71" stroke="#3e6aa3" stroke-width="0.6" stroke-dasharray="1,0.6"></line><path d="M646.5,70 L654.5,61 M646.5,70 L645.8,69" stroke="#3e6aa3" stroke-width="2.4" stroke-linecap="round"></path><path d="M647.5,69 L654,61.8" stroke="#fff" stroke-width="0.8"></path><path d="M653,60 L657,56.5 Q659,56 659,58 L655.5,62 Z" fill="#8e9299" stroke="#3e6aa3" stroke-width="0.8"></path><circle cx="673.1" cy="64" r="5.6" fill="#2e5e9c"></circle><path d="M670.7,61.6 l4.8,4.8 M675.5,61.6 l-4.8,4.8" stroke="#fff" stroke-width="1.3"></path><rect x="691" y="33" width="8" height="8" fill="#fff" stroke="#9fb3cf" stroke-width="0.7"></rect><path d="M690.5,31 h9 M695,29 v2 M700.5,33 v8 M700.5,37 h1.5" stroke="#3e6aa3" stroke-width="0.8"></path><text x="693" y="39.5" font-size="5" fill="#3e6aa3" font-family="Liberation Sans">a°</text><rect x="691" y="49" width="7.5" height="7.5" fill="#fff" stroke="#c5d0e0" stroke-width="0.6"></rect><path d="M692.5,55 L701.5,46.5" stroke="#3e6aa3" stroke-width="2.2" stroke-linecap="round"></path><path d="M693,54.5 L701,47" stroke="#e3e7ee" stroke-width="0.8"></path><path d="M691,62.3 v11.5 h11" fill="none" stroke="#3e6aa3" stroke-width="1"></path><path d="M691.5,73.3 v-6 a6,6 0 0 1 6,6 z" fill="#d2d8e2" stroke="#3e6aa3" stroke-width="0.6"></path><path d="M768.8,34 A6.6,6.6 0 1 1 766.5,31.2" fill="none" stroke="#333" stroke-width="0.8"></path><path d="M767,31 L770.5,31.5 L768.8,35 Z" fill="#222"></path><circle cx="761.1999999999999" cy="35.699999999999996" r="1.9" fill="none" stroke="#2aa0d8" stroke-width="1.3"></circle><circle cx="764.4" cy="35.699999999999996" r="1.9" fill="none" stroke="#d8333a" stroke-width="1.3"></circle><circle cx="761.1999999999999" cy="38.9" r="1.9" fill="none" stroke="#f0a21f" stroke-width="1.3"></circle><circle cx="764.4" cy="38.9" r="1.9" fill="none" stroke="#4cae4c" stroke-width="1.3"></circle><circle cx="782.0999999999999" cy="36.0" r="2.6" fill="none" stroke="#2aa0d8" stroke-width="1.3"></circle><circle cx="786.5" cy="36.0" r="2.6" fill="none" stroke="#d8333a" stroke-width="1.3"></circle><circle cx="782.0999999999999" cy="40.400000000000006" r="2.6" fill="none" stroke="#f0a21f" stroke-width="1.3"></circle><circle cx="786.5" cy="40.400000000000006" r="2.6" fill="none" stroke="#4cae4c" stroke-width="1.3"></circle><path d="M786,35 Q788,31 791.5,30.3" fill="none" stroke="#222" stroke-width="1.3"></path><path d="M790,28.5 L793.5,30.3 L790.5,32.8 Z" fill="#222"></path><defs><linearGradient id="lbg" x1="0" y1="0" x2="0" y2="1"><stop offset="0" stop-color="#bcd6f2" stop-opacity="0.6"></stop><stop offset="1" stop-color="#8db5e3" stop-opacity="0.6"></stop></linearGradient></defs><rect x="805" y="28.8" width="17" height="17" rx="1.5" fill="#a9c9ec"></rect><rect x="805" y="28.8" width="17" height="17" rx="1.5" fill="url(#lbg)"></rect><rect x="808.5" y="34" width="11" height="8" fill="#eee" stroke="#333" stroke-width="0.7"></rect><circle cx="811" cy="33.5" r="2.5" fill="#ddd" stroke="#444" stroke-width="0.6"></circle><path d="M810,36 h3 v4 M814.5,38 h4" stroke="#444" stroke-width="0.5"></path><rect x="838.2" y="28.8" width="17" height="17" rx="1.5" fill="#a9c9ec"></rect><rect x="838.2" y="28.8" width="17" height="17" rx="1.5" fill="url(#lbg)"></rect><path d="M842,36 L846,34 L846,41 L842,43 Z" fill="#ddd" stroke="#333" stroke-width="0.6"></path><path d="M846,33 L852,31 L852,41 L846,43 Z" fill="#fff" stroke="#222" stroke-width="0.9"></path><path d="M848,39 Q849,35 851,33.5" stroke="#333" stroke-width="0.8" fill="none"></path><rect x="871" y="28.8" width="17" height="17" rx="1.5" fill="#a9c9ec"></rect><rect x="871" y="28.8" width="17" height="17" rx="1.5" fill="url(#lbg)"></rect><rect x="875.5" y="32" width="5.5" height="10" fill="#111"></rect><rect x="875" y="32" width="2" height="10" fill="#fff" stroke="#333" stroke-width="0.4"></rect><rect x="882" y="33" width="3.5" height="3" fill="#fff" stroke="#555" stroke-width="0.4"></rect><rect x="882" y="37" width="3.5" height="3" fill="#fff" stroke="#555" stroke-width="0.4"></rect><path d="M881,42.5 h5" stroke="#444" stroke-width="0.5"></path><rect x="899" y="28.8" width="17" height="17" rx="1.5" fill="#a9c9ec"></rect><rect x="899" y="28.8" width="17" height="17" rx="1.5" fill="url(#lbg)"></rect><path d="M902,38 L908,33 L913,35 L913,43 L904,43 Z" fill="#eee" stroke="#333" stroke-width="0.6"></path><circle cx="905" cy="40.5" r="2.6" fill="#fff" stroke="#222" stroke-width="0.8"></circle><path d="M910,37 L914.5,31" stroke="#222" stroke-width="0.9"></path><path d="M909,43 v-4 M911,43 v-5" stroke="#333" stroke-width="0.8"></path><rect x="934" y="28.8" width="17.4" height="17" rx="1.5" fill="#1d7fcf"></rect><rect x="937.5" y="31.5" width="8" height="6" fill="#fff" stroke="#333" stroke-width="0.5"></rect><rect x="940" y="34.5" width="8.5" height="7" fill="#fff" stroke="#333" stroke-width="0.5"></rect><rect x="941.5" y="37.5" width="5" height="6" fill="#eee" stroke="#333" stroke-width="0.5"></rect><rect x="968.6" y="28.8" width="17.1" height="17" rx="1.5" fill="#f2e32f"></rect><path d="M971.5,43.5 v-9 l3,-2 v2 h2 v-1 h3 v3 h3.5 v7 z" fill="#fff" stroke="#333" stroke-width="0.7"></path><path d="M973,36 h1 M973,38.5 h1 M976.5,36 h1 M976.5,38.5 h1 M979.5,39 h1 M976.5,41 h1" stroke="#333" stroke-width="0.7"></path><rect x="998" y="28.8" width="17.6" height="17" rx="1.5" fill="#c21f2c"></rect><path d="M1001.5,33 h10.5 l-1.5,2 h-8 z M1002,37 h10 M1001.5,40 h10.5 M1003,35 v8 M1010.5,35 v8 M1002,43 h10" fill="#fff" stroke="#fff" stroke-width="1.1"></path></svg>
<!-- PANELS -->
<div class="a" style="left:0;top:87px;width:170px;height:11px;background:#dedede"></div>
<div class="t" style="left: 2px; top: 88px; font-size: 7.5px; transform: scaleX(0.956); transform-origin: left center;">Views</div>
<div class="a" style="left:0;top:98px;width:170px;height:13px;background:#f5f5f5"></div>
<div class="a" style="left:0;top:111px;width:170px;height:173px;background:#fff"></div>
<div class="a" style="left:0;top:286px;width:170px;height:11px;background:#dedede"></div>
<div class="t" style="left: 2px; top: 287px; font-size: 7.5px; transform: scaleX(0.827); transform-origin: left center;">Elements read</div>
<div class="a" style="left:0;top:297px;width:170px;height:13px;background:#f5f5f5"></div>
<div class="a" style="left:0;top:310px;width:170px;height:54px;background:#fff"></div>
<div class="a" style="left:0;top:367px;width:170px;height:11px;background:#dedede"></div>
<div class="t" style="left: 2px; top: 368px; font-size: 7.5px; transform: scaleX(0.855); transform-origin: left center;">Own elements</div>
<div class="a" style="left:0;top:378px;width:170px;height:12px;background:#f5f5f5"></div>
<div class="a" style="left:0;top:390px;width:170px;height:150px;background:#fff"></div>
<!--PANELS_C--><div class="a" style="left:0;top:260.4px;width:170px;height:10px;background:#cce8ff"></div>
<div class="t" style="left: 14.2px; top: 111.6px; color: rgb(22, 22, 22); font-size: 7px; transform: scaleX(0.91); transform-origin: left center;">Floors</div>
<div class="t" style="left: 25.5px; top: 122.2px; color: rgb(22, 22, 22); font-size: 7px; transform: scaleX(0.912); transform-origin: left center;">Roof</div>
<div class="t" style="left: 25.5px; top: 132.9px; color: rgb(22, 22, 22); font-size: 7px; transform: scaleX(0.928); transform-origin: left center;">Lounge roof</div>
<div class="t" style="left: 25.5px; top: 143.5px; color: rgb(22, 22, 22); font-size: 7px; transform: scaleX(0.941); transform-origin: left center;">Loft</div>
<div class="t" style="left: 25.5px; top: 154.1px; color: rgb(22, 22, 22); font-size: 7px; transform: scaleX(0.938); transform-origin: left center;">Ground floor</div>
<div class="t" style="left: 14.2px; top: 164.8px; color: rgb(22, 22, 22); font-size: 7px; transform: scaleX(0.932); transform-origin: left center;">Elevations</div>
<div class="t" style="left: 25.5px; top: 175.4px; color: rgb(22, 22, 22); font-size: 7px; transform: scaleX(0.821); transform-origin: left center;">East</div>
<div class="t" style="left: 25.5px; top: 186px; color: rgb(22, 22, 22); font-size: 7px; transform: scaleX(0.952); transform-origin: left center;">North</div>
<div class="t" style="left: 25.5px; top: 196.6px; color: rgb(22, 22, 22); font-size: 7px; transform: scaleX(0.929); transform-origin: left center;">South</div>
<div class="t" style="left: 25.5px; top: 207.3px; color: rgb(22, 22, 22); font-size: 7px; transform: scaleX(0.897); transform-origin: left center;">West</div>
<div class="t" style="left: 14.2px; top: 217.9px; color: rgb(22, 22, 22); font-size: 7px; transform: scaleX(0.949); transform-origin: left center;">Sections</div>
<div class="t" style="left: 25.5px; top: 228.5px; color: rgb(22, 22, 22); font-size: 7px; transform: scaleX(0.823); transform-origin: left center;">Transversal 1</div>
<div class="t" style="left: 25.5px; top: 239.2px; color: rgb(22, 22, 22); font-size: 7px; transform: scaleX(0.835); transform-origin: left center;">Transversal 2</div>
<div class="t" style="left: 14.2px; top: 249.8px; color: rgb(22, 22, 22); font-size: 7px; transform: scaleX(0.972); transform-origin: left center;">3D views</div>
<div class="t" style="left: 25.5px; top: 260.4px; color: rgb(22, 22, 22); font-size: 7px; transform: scaleX(0.838); transform-origin: left center;">3D</div>
<div class="t" style="left: 25.5px; top: 310.3px; color: rgb(34, 34, 34); font-size: 7px; font-weight: bold; transform: scaleX(0.883); transform-origin: left center;">Models</div>
<div class="t" style="left: 25.5px; top: 320.9px; color: rgb(34, 34, 34); font-size: 7px; font-weight: bold; transform: scaleX(0.876); transform-origin: left center;">Categories</div>
<div class="a" style="left:0;top:390px;width:160px;height:12px;background:#fff;border-bottom:1px solid #eee"></div>
<div class="t" style="left: 21.3px; top: 392.2px; color: rgb(22, 22, 22); font-size: 7px; transform: scaleX(0.944); transform-origin: left center;">Active</div>
<div class="t" style="left: 45.8px; top: 392.2px; color: rgb(22, 22, 22); font-size: 7px; transform: scaleX(0.861); transform-origin: left center;">Reference</div>
<div class="a" style="left:160.5px;top:390px;width:9.5px;height:141px;background:#f0f0f0"></div>
<div class="a" style="left:0;top:466.8px;width:159.5px;height:10.1px;background:#cce8ff"></div>
<div class="t" style="left: 45.8px; top: 403.6px; color: rgb(22, 22, 22); font-size: 7px; transform: scaleX(0.822); transform-origin: left center;">STR_Metal</div>
<div class="t" style="left: 45.8px; top: 414.2px; color: rgb(22, 22, 22); font-size: 7px; transform: scaleX(0.825); transform-origin: left center;">STR_Floor slabs</div>
<div class="t" style="left: 45.8px; top: 424.9px; color: rgb(22, 22, 22); font-size: 7px; transform: scaleX(0.847); transform-origin: left center;">ARCH_Façade_wall</div>
<div class="t" style="left: 45.8px; top: 435.5px; color: rgb(22, 22, 22); font-size: 7px; transform: scaleX(0.89); transform-origin: left center;">ARCH_Indoor_wall</div>
<div class="t" style="left: 45.8px; top: 446.1px; color: rgb(22, 22, 22); font-size: 7px; transform: scaleX(0.866); transform-origin: left center;">ARCH_Doors and wi...</div>
<div class="t" style="left: 45.8px; top: 456.8px; color: rgb(22, 22, 22); font-size: 7px; transform: scaleX(0.988); transform-origin: left center;">ARCH_Spaces</div>
<div class="t" style="left: 45.8px; top: 467.4px; color: rgb(22, 22, 22); font-size: 7px; transform: scaleX(1.013); transform-origin: left center;">ARCH_Garden</div>
<div class="t" style="left: 45.8px; top: 478px; color: rgb(22, 22, 22); font-size: 7px; transform: scaleX(1.022); transform-origin: left center;">ARCH_Others</div>
<div class="t" style="left: 45.8px; top: 488.6px; color: rgb(22, 22, 22); font-size: 7px; transform: scaleX(0.973); transform-origin: left center;">ARCH_Fence</div>
<div class="t" style="left: 45.8px; top: 499.3px; color: rgb(22, 22, 22); font-size: 7px; transform: scaleX(0.874); transform-origin: left center;">FUR_Bathroom</div>
<div class="t" style="left: 45.8px; top: 509.9px; color: rgb(22, 22, 22); font-size: 7px; transform: scaleX(0.929); transform-origin: left center;">FUR_Kitchen</div>
<div class="t" style="left: 45.8px; top: 520.5px; color: rgb(22, 22, 22); font-size: 7px; transform: scaleX(0.786); transform-origin: left center;">FUR_Rest</div>
<svg style="left:0;top:0" width="175" height="550"><path d="M151.1,91.4 L153.7,94.0 L156.29999999999998,91.4" fill="none" stroke="#222" stroke-width="1"></path><path d="M161.9,90.3 L166.70000000000002,95.10000000000001 M166.70000000000002,90.3 L161.9,95.10000000000001" stroke="#222" stroke-width="0.9"></path><rect x="0.9" y="98.3" width="11.4" height="12.3" fill="#cde4f7" stroke="#9cc7ea" stroke-width="0.6"></rect><path d="M2.7,104"></path><path d="M15.8,104"></path><path d="M29.9,104"></path><path d="M42.2,104"></path><path d="M3,103.5 l3.5,-1.5 l3.5,1.5 v3.5 l-3.5,1.5 l-3.5,-1.5 z" fill="#e3e9f1" stroke="#7d98bd" stroke-width="0.6"></path><path d="M3,103.5 l3.5,1.5 l3.5,-1.5 M6.5,105 v3.5" fill="none" stroke="#7d98bd" stroke-width="0.5"></path><path d="M10.5,99.5 v3.5 M8.7,101.2 h3.6" stroke="#3e6aa3" stroke-width="0.9"></path><path d="M16,103.5 l3.5,-1.5 l3.5,1.5 v3.5 l-3.5,1.5 l-3.5,-1.5 z" fill="#e3e9f1" stroke="#7d98bd" stroke-width="0.6"></path><path d="M16,103.5 l3.5,1.5 l3.5,-1.5 M19.5,105 v3.5" fill="none" stroke="#7d98bd" stroke-width="0.5"></path><path d="M19.5,107 L23,100" stroke="#3e6aa3" stroke-width="1.3"></path><path d="M29.5,103.5 l3.5,-1.5 l3.5,1.5 v3.5 l-3.5,1.5 l-3.5,-1.5 z" fill="#e3e9f1" stroke="#7d98bd" stroke-width="0.6"></path><path d="M29.5,103.5 l3.5,1.5 l3.5,-1.5 M33.0,105 v3.5" fill="none" stroke="#7d98bd" stroke-width="0.5"></path><circle cx="35.5" cy="102.3" r="2.3" fill="#fff" stroke="#7d98bd" stroke-width="0.7"></circle><path d="M42.5,103.5 l3.5,-1.5 l3.5,1.5 v3.5 l-3.5,1.5 l-3.5,-1.5 z" fill="#e3e9f1" stroke="#7d98bd" stroke-width="0.6"></path><path d="M42.5,103.5 l3.5,1.5 l3.5,-1.5 M46.0,105 v3.5" fill="none" stroke="#7d98bd" stroke-width="0.5"></path><path d="M47.3,100 l2.6,2.6 M49.9,100 l-2.6,2.6" stroke="#e02020" stroke-width="0.8"></path><path d="M56.5,107.5 h7.5 M58,107 l2.2,-3 l2.2,3 z M57.5,102.5 a2.7,1.6 0 0 1 5.4,0 z" fill="#3e6aa3" stroke="#3e6aa3" stroke-width="0.6"></path><circle cx="60.2" cy="101.3" r="0.9" fill="#fff"></circle><line x1="70" y1="99.5" x2="70" y2="109.5" stroke="#ccc" stroke-width="0.6"></line><line x1="101.6" y1="99.5" x2="101.6" y2="109.5" stroke="#ccc" stroke-width="0.6"></line><rect x="74.5" y="102" width="7.5" height="5.5" rx="1" fill="#e6ebf2" stroke="#8aa3c6" stroke-width="0.6"></rect><circle cx="78.2" cy="104.7" r="1.4" fill="none" stroke="#8aa3c6" stroke-width="0.5"></circle><rect x="87.5" y="102" width="7.5" height="5.5" rx="1" fill="#e6ebf2" stroke="#8aa3c6" stroke-width="0.6"></rect><path d="M89,103 v3 M91,103 v3" stroke="#8aa3c6" stroke-width="0.5"></path><path d="M106.5,101 L110,103 L113.5,102 L113.5,106.5 L110,108 L106.5,106 Z" fill="#c5d3e6" stroke="#6b8db8" stroke-width="0.6"></path><path d="M120.5,100.5 v8 M120.5,101 L127.5,103 L127,106.5 L120.5,108" fill="#e6ebf2" stroke="#6b8db8" stroke-width="0.6"></path><path d="M4.4,114.9 L7,117.5 L9.6,114.9" fill="none" stroke="#303030" stroke-width="1.3"></path><path d="M4.4,168.05 L7,170.65000000000003 L9.6,168.05" fill="none" stroke="#303030" stroke-width="1.3"></path><path d="M4.4,221.2 L7,223.8 L9.6,221.2" fill="none" stroke="#303030" stroke-width="1.3"></path><path d="M4.4,253.08999999999997 L7,255.69 L9.6,253.08999999999997" fill="none" stroke="#303030" stroke-width="1.3"></path><path d="M81,283.5 h7" stroke="#999" stroke-width="0.6" stroke-dasharray="0.8,0.9"></path><path d="M81,364.5 h7" stroke="#999" stroke-width="0.6" stroke-dasharray="0.8,0.9"></path><path d="M151.1,290.2 L153.7,292.8 L156.29999999999998,290.2" fill="none" stroke="#222" stroke-width="1"></path><path d="M161.9,289.1 L166.70000000000002,293.9 M166.70000000000002,289.1 L161.9,293.9" stroke="#222" stroke-width="0.9"></path><path d="M2.5,300 v7 M10.5,300 v7 M3,303.5 h7" stroke="#3e6aa3" stroke-width="0.9"></path><rect x="5" y="301.5" width="3" height="4" fill="none" stroke="#3e6aa3" stroke-width="0.6"></rect><rect x="15.5" y="300" width="8" height="7.3" fill="#e6ebf2" stroke="#3e6aa3" stroke-width="0.7"></rect><path d="M19.5,300 v7.3 M15.5,303.6 h8" stroke="#3e6aa3" stroke-width="0.6"></path><rect x="28.5" y="300" width="8.5" height="7.3" fill="#e6ebf2" stroke="#3e6aa3" stroke-width="0.7"></rect><path d="M32.7,300 v7.3 M28.5,303.6 h8.5" stroke="#3e6aa3" stroke-width="0.6"></path><path d="M43,302 L46,300 L49.5,302 L49.5,306 L46,308 L43,306 Z" fill="#e6ebf2" stroke="#3e6aa3" stroke-width="0.6"></path><path d="M47,305 l2,2" stroke="#3e6aa3" stroke-width="0.8"></path><path d="M59.6,303 v5" stroke="#3e6aa3" stroke-width="1.5"></path><circle cx="59.6" cy="300.5" r="0.9" fill="#3e6aa3"></circle><path d="M16.5,318.5 L19,311.5 L22,312.5 L20,318 Z" fill="#dfe6f0" stroke="#3e6aa3" stroke-width="0.8"></path><circle cx="19" cy="314" r="1" fill="#3e6aa3"></circle><path d="M19,321 v3 M15.5,327.5 v-2.5 h7 v2.5 M19,325 v2.5" fill="none" stroke="#3e6aa3" stroke-width="0.7"></path><rect x="17.7" y="320.5" width="2.6" height="2.3" fill="#3e6aa3"></rect><rect x="14.5" y="327" width="2.3" height="2" fill="#3e6aa3"></rect><rect x="21.2" y="327" width="2.3" height="2" fill="#3e6aa3"></rect><path d="M127.7,314.9 Q132,311.59999999999997 136.3,314.9 Q132,318.2 127.7,314.9 Z" fill="#dfe6f0" stroke="#7d98bd" stroke-width="0.5"></path><circle cx="132" cy="314.9" r="2" fill="#5f83b3"></circle><path d="M147,310.59999999999997 L150.8,312.75 L150.8,317.04999999999995 L147,319.2 L143.2,317.04999999999995 L143.2,312.75 Z" fill="#46688f"></path><path d="M145.2,314.09999999999997 L147,313.0 L148.8,314.09999999999997 L148.8,315.9 L147,316.9 L145.2,315.9 Z" fill="none" stroke="#c9d6e6" stroke-width="0.6"></path><rect x="158.3" y="313.9" width="8" height="5.2" rx="0.6" fill="#3f6184"></rect><path d="M160.0,313.9 v-2 a2.2,2.2 0 0 1 4.4,0 v0.2" fill="none" stroke="#3f6184" stroke-width="1"></path><path d="M127.7,325.5 Q132,322.2 136.3,325.5 Q132,328.8 127.7,325.5 Z" fill="#dfe6f0" stroke="#7d98bd" stroke-width="0.5"></path><circle cx="132" cy="325.5" r="2" fill="#5f83b3"></circle><path d="M147,321.2 L150.8,323.35 L150.8,327.65 L147,329.8 L143.2,327.65 L143.2,323.35 Z" fill="#46688f"></path><path d="M145.2,324.7 L147,323.6 L148.8,324.7 L148.8,326.5 L147,327.5 L145.2,326.5 Z" fill="none" stroke="#c9d6e6" stroke-width="0.6"></path><rect x="158.3" y="324.5" width="8" height="5.2" rx="0.6" fill="#3f6184"></rect><path d="M160.0,324.5 v-2 a2.2,2.2 0 0 1 4.4,0 v0.2" fill="none" stroke="#3f6184" stroke-width="1"></path><path d="M171.5,310 v8" stroke="#aaa" stroke-width="0.6" stroke-dasharray="0.7,0.8"></path><path d="M151.1,371.0 L153.7,373.6 L156.29999999999998,371.0" fill="none" stroke="#222" stroke-width="1"></path><path d="M161.9,369.90000000000003 L166.70000000000002,374.7 M166.70000000000002,369.90000000000003 L161.9,374.7" stroke="#222" stroke-width="0.9"></path><path d="M6.5,380.5 v8 M2.5,384.5 h8" stroke="#222" stroke-width="0.9"></path><path d="M15,389 L15.8,386.3 L20.8,381.3 L22.3,382.8 L17.3,387.8 Z" fill="#e8c04a" stroke="#a88a20" stroke-width="0.4"></path><path d="M27.3,380.8 l7.3,7.3 M34.6,380.8 l-7.3,7.3" stroke="#d9262e" stroke-width="1.2"></path><line x1="38.5" y1="380" x2="38.5" y2="389" stroke="#bbb" stroke-width="0.6"></line><line x1="67.3" y1="380" x2="67.3" y2="389" stroke="#bbb" stroke-width="0.6"></line><path d="M43.7,386 L47.6,382.3 L51.5,386 Z M56,382.8 L63.8,382.8 L59.9,386.5 Z" fill="#222"></path><path d="M72.2,384 L76.2,382 L80.2,384 L76.2,386 Z" fill="#e6ebf2" stroke="#7d98bd" stroke-width="0.6"></path><path d="M72.2,386 L76.2,388 L80.2,386" fill="none" stroke="#7d98bd" stroke-width="0.6"></path><path d="M84,384 L88,382 L92,384 L88,386 Z" fill="#e6ebf2" stroke="#7d98bd" stroke-width="0.6"></path><path d="M84,386 L88,388 L92,386" fill="none" stroke="#7d98bd" stroke-width="0.6"></path><path d="M97,384 L101,382 L105,384 L101,386 Z" fill="#e6ebf2" stroke="#7d98bd" stroke-width="0.6"></path><path d="M97,386 L101,388 L105,386" fill="none" stroke="#7d98bd" stroke-width="0.6"></path><rect x="113" y="381" width="8.5" height="7.5" fill="#e6ebf2" stroke="#3e6aa3" stroke-width="0.7"></rect><path d="M117.2,381 v7.5 M113,384.7 h8.5" stroke="#3e6aa3" stroke-width="0.6"></path><rect x="125.2" y="381" width="8.5" height="7.5" fill="#e6ebf2" stroke="#3e6aa3" stroke-width="0.7"></rect><path d="M129.4,381 v7.5 M125.2,384.7 h8.5" stroke="#3e6aa3" stroke-width="0.6"></path><rect x="137.7" y="381" width="8.5" height="7.5" fill="#e6ebf2" stroke="#3e6aa3" stroke-width="0.7"></rect><path d="M141.89999999999998,381 v7.5 M137.7,384.7 h8.5" stroke="#3e6aa3" stroke-width="0.6"></path><path d="M154,384 q2,-3 4,0 q2,3 4,0" fill="none" stroke="#3e6aa3" stroke-width="0.8"></path><rect x="166.5" y="381" width="3" height="7" fill="#dfe6f0"></rect><line x1="18" y1="391" x2="18" y2="402" stroke="#e6e6e6" stroke-width="0.6"></line><line x1="42.5" y1="391" x2="42.5" y2="402" stroke="#e6e6e6" stroke-width="0.6"></line><line x1="113.9" y1="391" x2="113.9" y2="402" stroke="#e6e6e6" stroke-width="0.6"></line><line x1="129.3" y1="391" x2="129.3" y2="402" stroke="#e6e6e6" stroke-width="0.6"></line><line x1="144" y1="391" x2="144" y2="402" stroke="#e6e6e6" stroke-width="0.6"></line><line x1="160.3" y1="391" x2="160.3" y2="402" stroke="#e6e6e6" stroke-width="0.6"></line><path d="M5.8,405.9 L8.1,408.2 L5.8,410.5" fill="none" stroke="#333" stroke-width="1"></path><rect x="27.5" y="405.59999999999997" width="5.2" height="5.2" fill="#fff" stroke="#555" stroke-width="0.6"></rect><path d="M117.3,408.2 Q121.6,404.9 125.89999999999999,408.2 Q121.6,411.5 117.3,408.2 Z" fill="#dfe6f0" stroke="#7d98bd" stroke-width="0.5"></path><circle cx="121.6" cy="408.2" r="2" fill="#5f83b3"></circle><path d="M137.2,403.9 L141.0,406.05 L141.0,410.34999999999997 L137.2,412.5 L133.39999999999998,410.34999999999997 L133.39999999999998,406.05 Z" fill="#46688f"></path><path d="M135.39999999999998,407.4 L137.2,406.3 L139.0,407.4 L139.0,409.2 L137.2,410.2 L135.39999999999998,409.2 Z" fill="none" stroke="#c9d6e6" stroke-width="0.6"></path><rect x="148.7" y="407.2" width="8" height="5.2" rx="0.6" fill="#3f6184"></rect><path d="M150.39999999999998,407.2 v-2 a2.2,2.2 0 0 1 4.4,0 v0.2" fill="none" stroke="#3f6184" stroke-width="1"></path><line x1="18" y1="402.9" x2="18" y2="413.5" stroke="#f0f0f0" stroke-width="0.5"></line><line x1="42.5" y1="402.9" x2="42.5" y2="413.5" stroke="#f0f0f0" stroke-width="0.5"></line><line x1="113.9" y1="402.9" x2="113.9" y2="413.5" stroke="#f0f0f0" stroke-width="0.5"></line><line x1="129.3" y1="402.9" x2="129.3" y2="413.5" stroke="#f0f0f0" stroke-width="0.5"></line><line x1="144" y1="402.9" x2="144" y2="413.5" stroke="#f0f0f0" stroke-width="0.5"></line><line x1="0" y1="413.5" x2="160" y2="413.5" stroke="#f2f2f2" stroke-width="0.5"></line><path d="M5.8,416.53 L8.1,418.83 L5.8,421.13" fill="none" stroke="#333" stroke-width="1"></path><rect x="27.5" y="416.22999999999996" width="5.2" height="5.2" fill="#fff" stroke="#555" stroke-width="0.6"></rect><path d="M117.3,418.83 Q121.6,415.53 125.89999999999999,418.83 Q121.6,422.13 117.3,418.83 Z" fill="#dfe6f0" stroke="#7d98bd" stroke-width="0.5"></path><circle cx="121.6" cy="418.83" r="2" fill="#5f83b3"></circle><path d="M137.2,414.53 L141.0,416.68 L141.0,420.97999999999996 L137.2,423.13 L133.39999999999998,420.97999999999996 L133.39999999999998,416.68 Z" fill="#46688f"></path><path d="M135.39999999999998,418.03 L137.2,416.93 L139.0,418.03 L139.0,419.83 L137.2,420.83 L135.39999999999998,419.83 Z" fill="none" stroke="#c9d6e6" stroke-width="0.6"></path><rect x="148.7" y="417.83" width="8" height="5.2" rx="0.6" fill="#3f6184"></rect><path d="M150.39999999999998,417.83 v-2 a2.2,2.2 0 0 1 4.4,0 v0.2" fill="none" stroke="#3f6184" stroke-width="1"></path><line x1="18" y1="413.53" x2="18" y2="424.13" stroke="#f0f0f0" stroke-width="0.5"></line><line x1="42.5" y1="413.53" x2="42.5" y2="424.13" stroke="#f0f0f0" stroke-width="0.5"></line><line x1="113.9" y1="413.53" x2="113.9" y2="424.13" stroke="#f0f0f0" stroke-width="0.5"></line><line x1="129.3" y1="413.53" x2="129.3" y2="424.13" stroke="#f0f0f0" stroke-width="0.5"></line><line x1="144" y1="413.53" x2="144" y2="424.13" stroke="#f0f0f0" stroke-width="0.5"></line><line x1="0" y1="424.13" x2="160" y2="424.13" stroke="#f2f2f2" stroke-width="0.5"></line><path d="M5.8,427.15999999999997 L8.1,429.46 L5.8,431.76" fill="none" stroke="#333" stroke-width="1"></path><rect x="27.5" y="426.85999999999996" width="5.2" height="5.2" fill="#fff" stroke="#555" stroke-width="0.6"></rect><path d="M117.3,429.46 Q121.6,426.15999999999997 125.89999999999999,429.46 Q121.6,432.76 117.3,429.46 Z" fill="#dfe6f0" stroke="#7d98bd" stroke-width="0.5"></path><circle cx="121.6" cy="429.46" r="2" fill="#5f83b3"></circle><path d="M137.2,425.15999999999997 L141.0,427.31 L141.0,431.60999999999996 L137.2,433.76 L133.39999999999998,431.60999999999996 L133.39999999999998,427.31 Z" fill="#46688f"></path><path d="M135.39999999999998,428.65999999999997 L137.2,427.56 L139.0,428.65999999999997 L139.0,430.46 L137.2,431.46 L135.39999999999998,430.46 Z" fill="none" stroke="#c9d6e6" stroke-width="0.6"></path><rect x="148.7" y="428.46" width="8" height="5.2" rx="0.6" fill="#3f6184"></rect><path d="M150.39999999999998,428.46 v-2 a2.2,2.2 0 0 1 4.4,0 v0.2" fill="none" stroke="#3f6184" stroke-width="1"></path><line x1="18" y1="424.15999999999997" x2="18" y2="434.76" stroke="#f0f0f0" stroke-width="0.5"></line><line x1="42.5" y1="424.15999999999997" x2="42.5" y2="434.76" stroke="#f0f0f0" stroke-width="0.5"></line><line x1="113.9" y1="424.15999999999997" x2="113.9" y2="434.76" stroke="#f0f0f0" stroke-width="0.5"></line><line x1="129.3" y1="424.15999999999997" x2="129.3" y2="434.76" stroke="#f0f0f0" stroke-width="0.5"></line><line x1="144" y1="424.15999999999997" x2="144" y2="434.76" stroke="#f0f0f0" stroke-width="0.5"></line><line x1="0" y1="434.76" x2="160" y2="434.76" stroke="#f2f2f2" stroke-width="0.5"></line><path d="M5.8,437.78999999999996 L8.1,440.09 L5.8,442.39" fill="none" stroke="#333" stroke-width="1"></path><rect x="27.5" y="437.48999999999995" width="5.2" height="5.2" fill="#fff" stroke="#555" stroke-width="0.6"></rect><path d="M117.3,440.09 Q121.6,436.78999999999996 125.89999999999999,440.09 Q121.6,443.39 117.3,440.09 Z" fill="#dfe6f0" stroke="#7d98bd" stroke-width="0.5"></path><circle cx="121.6" cy="440.09" r="2" fill="#5f83b3"></circle><path d="M137.2,435.78999999999996 L141.0,437.94 L141.0,442.23999999999995 L137.2,444.39 L133.39999999999998,442.23999999999995 L133.39999999999998,437.94 Z" fill="#46688f"></path><path d="M135.39999999999998,439.28999999999996 L137.2,438.19 L139.0,439.28999999999996 L139.0,441.09 L137.2,442.09 L135.39999999999998,441.09 Z" fill="none" stroke="#c9d6e6" stroke-width="0.6"></path><rect x="148.7" y="439.09" width="8" height="5.2" rx="0.6" fill="#3f6184"></rect><path d="M150.39999999999998,439.09 v-2 a2.2,2.2 0 0 1 4.4,0 v0.2" fill="none" stroke="#3f6184" stroke-width="1"></path><line x1="18" y1="434.78999999999996" x2="18" y2="445.39" stroke="#f0f0f0" stroke-width="0.5"></line><line x1="42.5" y1="434.78999999999996" x2="42.5" y2="445.39" stroke="#f0f0f0" stroke-width="0.5"></line><line x1="113.9" y1="434.78999999999996" x2="113.9" y2="445.39" stroke="#f0f0f0" stroke-width="0.5"></line><line x1="129.3" y1="434.78999999999996" x2="129.3" y2="445.39" stroke="#f0f0f0" stroke-width="0.5"></line><line x1="144" y1="434.78999999999996" x2="144" y2="445.39" stroke="#f0f0f0" stroke-width="0.5"></line><line x1="0" y1="445.39" x2="160" y2="445.39" stroke="#f2f2f2" stroke-width="0.5"></line><path d="M5.8,448.41999999999996 L8.1,450.71999999999997 L5.8,453.02" fill="none" stroke="#333" stroke-width="1"></path><rect x="27.5" y="448.11999999999995" width="5.2" height="5.2" fill="#fff" stroke="#555" stroke-width="0.6"></rect><path d="M117.3,450.71999999999997 Q121.6,447.41999999999996 125.89999999999999,450.71999999999997 Q121.6,454.02 117.3,450.71999999999997 Z" fill="#dfe6f0" stroke="#7d98bd" stroke-width="0.5"></path><circle cx="121.6" cy="450.71999999999997" r="2" fill="#5f83b3"></circle><path d="M137.2,446.41999999999996 L141.0,448.57 L141.0,452.86999999999995 L137.2,455.02 L133.39999999999998,452.86999999999995 L133.39999999999998,448.57 Z" fill="#46688f"></path><path d="M135.39999999999998,449.91999999999996 L137.2,448.82 L139.0,449.91999999999996 L139.0,451.71999999999997 L137.2,452.71999999999997 L135.39999999999998,451.71999999999997 Z" fill="none" stroke="#c9d6e6" stroke-width="0.6"></path><rect x="148.7" y="449.71999999999997" width="8" height="5.2" rx="0.6" fill="#3f6184"></rect><path d="M150.39999999999998,449.71999999999997 v-2 a2.2,2.2 0 0 1 4.4,0 v0.2" fill="none" stroke="#3f6184" stroke-width="1"></path><line x1="18" y1="445.41999999999996" x2="18" y2="456.02" stroke="#f0f0f0" stroke-width="0.5"></line><line x1="42.5" y1="445.41999999999996" x2="42.5" y2="456.02" stroke="#f0f0f0" stroke-width="0.5"></line><line x1="113.9" y1="445.41999999999996" x2="113.9" y2="456.02" stroke="#f0f0f0" stroke-width="0.5"></line><line x1="129.3" y1="445.41999999999996" x2="129.3" y2="456.02" stroke="#f0f0f0" stroke-width="0.5"></line><line x1="144" y1="445.41999999999996" x2="144" y2="456.02" stroke="#f0f0f0" stroke-width="0.5"></line><line x1="0" y1="456.02" x2="160" y2="456.02" stroke="#f2f2f2" stroke-width="0.5"></line><path d="M5.8,459.05 L8.1,461.35 L5.8,463.65000000000003" fill="none" stroke="#333" stroke-width="1"></path><rect x="27.5" y="458.75" width="5.2" height="5.2" fill="#fff" stroke="#555" stroke-width="0.6"></rect><path d="M117.3,461.35 Q121.6,458.05 125.89999999999999,461.35 Q121.6,464.65000000000003 117.3,461.35 Z" fill="#dfe6f0" stroke="#7d98bd" stroke-width="0.5"></path><circle cx="121.6" cy="461.35" r="2" fill="#5f83b3"></circle><path d="M137.2,457.05 L141.0,459.20000000000005 L141.0,463.5 L137.2,465.65000000000003 L133.39999999999998,463.5 L133.39999999999998,459.20000000000005 Z" fill="#46688f"></path><path d="M135.39999999999998,460.55 L137.2,459.45000000000005 L139.0,460.55 L139.0,462.35 L137.2,463.35 L135.39999999999998,462.35 Z" fill="none" stroke="#c9d6e6" stroke-width="0.6"></path><rect x="148.7" y="460.35" width="8" height="5.2" rx="0.6" fill="#3f6184"></rect><path d="M150.39999999999998,460.35 v-2 a2.2,2.2 0 0 1 4.4,0 v0.2" fill="none" stroke="#3f6184" stroke-width="1"></path><line x1="18" y1="456.05" x2="18" y2="466.65000000000003" stroke="#f0f0f0" stroke-width="0.5"></line><line x1="42.5" y1="456.05" x2="42.5" y2="466.65000000000003" stroke="#f0f0f0" stroke-width="0.5"></line><line x1="113.9" y1="456.05" x2="113.9" y2="466.65000000000003" stroke="#f0f0f0" stroke-width="0.5"></line><line x1="129.3" y1="456.05" x2="129.3" y2="466.65000000000003" stroke="#f0f0f0" stroke-width="0.5"></line><line x1="144" y1="456.05" x2="144" y2="466.65000000000003" stroke="#f0f0f0" stroke-width="0.5"></line><line x1="0" y1="466.65000000000003" x2="160" y2="466.65000000000003" stroke="#f2f2f2" stroke-width="0.5"></line><path d="M5.8,469.68 L8.1,471.98 L5.8,474.28000000000003" fill="none" stroke="#333" stroke-width="1"></path><rect x="27.5" y="469.38" width="5.2" height="5.2" fill="#fff" stroke="#555" stroke-width="0.6"></rect><path d="M117.3,471.98 Q121.6,468.68 125.89999999999999,471.98 Q121.6,475.28000000000003 117.3,471.98 Z" fill="#eee" stroke="#aaa" stroke-width="0.5"></path><circle cx="121.6" cy="471.98" r="1.8" fill="#c4c4c4"></circle><path d="M118.1,468.98 L125.1,474.98" stroke="#999" stroke-width="0.7"></path><path d="M137.2,467.68 L141.0,469.83000000000004 L141.0,474.13 L137.2,476.28000000000003 L133.39999999999998,474.13 L133.39999999999998,469.83000000000004 Z" fill="#46688f"></path><path d="M135.39999999999998,471.18 L137.2,470.08000000000004 L139.0,471.18 L139.0,472.98 L137.2,473.98 L135.39999999999998,472.98 Z" fill="none" stroke="#c9d6e6" stroke-width="0.6"></path><rect x="148.7" y="470.98" width="8" height="5.2" rx="0.6" fill="#3f6184"></rect><path d="M150.39999999999998,470.98 v-2 a2.2,2.2 0 0 1 4.4,0 v0.2" fill="none" stroke="#3f6184" stroke-width="1"></path><line x1="18" y1="466.68" x2="18" y2="477.28000000000003" stroke="#f0f0f0" stroke-width="0.5"></line><line x1="42.5" y1="466.68" x2="42.5" y2="477.28000000000003" stroke="#f0f0f0" stroke-width="0.5"></line><line x1="113.9" y1="466.68" x2="113.9" y2="477.28000000000003" stroke="#f0f0f0" stroke-width="0.5"></line><line x1="129.3" y1="466.68" x2="129.3" y2="477.28000000000003" stroke="#f0f0f0" stroke-width="0.5"></line><line x1="144" y1="466.68" x2="144" y2="477.28000000000003" stroke="#f0f0f0" stroke-width="0.5"></line><line x1="0" y1="477.28000000000003" x2="160" y2="477.28000000000003" stroke="#f2f2f2" stroke-width="0.5"></line><path d="M5.8,480.31 L8.1,482.61 L5.8,484.91" fill="none" stroke="#333" stroke-width="1"></path><rect x="27.5" y="480.01" width="5.2" height="5.2" fill="#fff" stroke="#555" stroke-width="0.6"></rect><path d="M117.3,482.61 Q121.6,479.31 125.89999999999999,482.61 Q121.6,485.91 117.3,482.61 Z" fill="#dfe6f0" stroke="#7d98bd" stroke-width="0.5"></path><circle cx="121.6" cy="482.61" r="2" fill="#5f83b3"></circle><path d="M137.2,478.31 L141.0,480.46000000000004 L141.0,484.76 L137.2,486.91 L133.39999999999998,484.76 L133.39999999999998,480.46000000000004 Z" fill="#46688f"></path><path d="M135.39999999999998,481.81 L137.2,480.71000000000004 L139.0,481.81 L139.0,483.61 L137.2,484.61 L135.39999999999998,483.61 Z" fill="none" stroke="#c9d6e6" stroke-width="0.6"></path><rect x="148.7" y="481.61" width="8" height="5.2" rx="0.6" fill="#3f6184"></rect><path d="M150.39999999999998,481.61 v-2 a2.2,2.2 0 0 1 4.4,0 v0.2" fill="none" stroke="#3f6184" stroke-width="1"></path><line x1="18" y1="477.31" x2="18" y2="487.91" stroke="#f0f0f0" stroke-width="0.5"></line><line x1="42.5" y1="477.31" x2="42.5" y2="487.91" stroke="#f0f0f0" stroke-width="0.5"></line><line x1="113.9" y1="477.31" x2="113.9" y2="487.91" stroke="#f0f0f0" stroke-width="0.5"></line><line x1="129.3" y1="477.31" x2="129.3" y2="487.91" stroke="#f0f0f0" stroke-width="0.5"></line><line x1="144" y1="477.31" x2="144" y2="487.91" stroke="#f0f0f0" stroke-width="0.5"></line><line x1="0" y1="487.91" x2="160" y2="487.91" stroke="#f2f2f2" stroke-width="0.5"></line><path d="M5.8,490.94 L8.1,493.24 L5.8,495.54" fill="none" stroke="#333" stroke-width="1"></path><rect x="27.5" y="490.64" width="5.2" height="5.2" fill="#fff" stroke="#555" stroke-width="0.6"></rect><path d="M117.3,493.24 Q121.6,489.94 125.89999999999999,493.24 Q121.6,496.54 117.3,493.24 Z" fill="#eee" stroke="#aaa" stroke-width="0.5"></path><circle cx="121.6" cy="493.24" r="1.8" fill="#c4c4c4"></circle><path d="M118.1,490.24 L125.1,496.24" stroke="#999" stroke-width="0.7"></path><path d="M137.2,488.94 L141.0,491.09000000000003 L141.0,495.39 L137.2,497.54 L133.39999999999998,495.39 L133.39999999999998,491.09000000000003 Z" fill="#46688f"></path><path d="M135.39999999999998,492.44 L137.2,491.34000000000003 L139.0,492.44 L139.0,494.24 L137.2,495.24 L135.39999999999998,494.24 Z" fill="none" stroke="#c9d6e6" stroke-width="0.6"></path><rect x="148.7" y="492.24" width="8" height="5.2" rx="0.6" fill="#3f6184"></rect><path d="M150.39999999999998,492.24 v-2 a2.2,2.2 0 0 1 4.4,0 v0.2" fill="none" stroke="#3f6184" stroke-width="1"></path><line x1="18" y1="487.94" x2="18" y2="498.54" stroke="#f0f0f0" stroke-width="0.5"></line><line x1="42.5" y1="487.94" x2="42.5" y2="498.54" stroke="#f0f0f0" stroke-width="0.5"></line><line x1="113.9" y1="487.94" x2="113.9" y2="498.54" stroke="#f0f0f0" stroke-width="0.5"></line><line x1="129.3" y1="487.94" x2="129.3" y2="498.54" stroke="#f0f0f0" stroke-width="0.5"></line><line x1="144" y1="487.94" x2="144" y2="498.54" stroke="#f0f0f0" stroke-width="0.5"></line><line x1="0" y1="498.54" x2="160" y2="498.54" stroke="#f2f2f2" stroke-width="0.5"></line><path d="M5.8,501.57 L8.1,503.87 L5.8,506.17" fill="none" stroke="#333" stroke-width="1"></path><rect x="27.5" y="501.27" width="5.2" height="5.2" fill="#fff" stroke="#555" stroke-width="0.6"></rect><path d="M117.3,503.87 Q121.6,500.57 125.89999999999999,503.87 Q121.6,507.17 117.3,503.87 Z" fill="#dfe6f0" stroke="#7d98bd" stroke-width="0.5"></path><circle cx="121.6" cy="503.87" r="2" fill="#5f83b3"></circle><path d="M137.2,499.57 L141.0,501.72 L141.0,506.02 L137.2,508.17 L133.39999999999998,506.02 L133.39999999999998,501.72 Z" fill="#46688f"></path><path d="M135.39999999999998,503.07 L137.2,501.97 L139.0,503.07 L139.0,504.87 L137.2,505.87 L135.39999999999998,504.87 Z" fill="none" stroke="#c9d6e6" stroke-width="0.6"></path><rect x="148.7" y="502.87" width="8" height="5.2" rx="0.6" fill="#3f6184"></rect><path d="M150.39999999999998,502.87 v-2 a2.2,2.2 0 0 1 4.4,0 v0.2" fill="none" stroke="#3f6184" stroke-width="1"></path><line x1="18" y1="498.57" x2="18" y2="509.17" stroke="#f0f0f0" stroke-width="0.5"></line><line x1="42.5" y1="498.57" x2="42.5" y2="509.17" stroke="#f0f0f0" stroke-width="0.5"></line><line x1="113.9" y1="498.57" x2="113.9" y2="509.17" stroke="#f0f0f0" stroke-width="0.5"></line><line x1="129.3" y1="498.57" x2="129.3" y2="509.17" stroke="#f0f0f0" stroke-width="0.5"></line><line x1="144" y1="498.57" x2="144" y2="509.17" stroke="#f0f0f0" stroke-width="0.5"></line><line x1="0" y1="509.17" x2="160" y2="509.17" stroke="#f2f2f2" stroke-width="0.5"></line><path d="M5.8,512.2 L8.1,514.5 L5.8,516.8" fill="none" stroke="#333" stroke-width="1"></path><rect x="27.5" y="511.9" width="5.2" height="5.2" fill="#fff" stroke="#555" stroke-width="0.6"></rect><path d="M117.3,514.5 Q121.6,511.2 125.89999999999999,514.5 Q121.6,517.8 117.3,514.5 Z" fill="#dfe6f0" stroke="#7d98bd" stroke-width="0.5"></path><circle cx="121.6" cy="514.5" r="2" fill="#5f83b3"></circle><path d="M137.2,510.2 L141.0,512.35 L141.0,516.65 L137.2,518.8 L133.39999999999998,516.65 L133.39999999999998,512.35 Z" fill="#46688f"></path><path d="M135.39999999999998,513.7 L137.2,512.6 L139.0,513.7 L139.0,515.5 L137.2,516.5 L135.39999999999998,515.5 Z" fill="none" stroke="#c9d6e6" stroke-width="0.6"></path><rect x="148.7" y="513.5" width="8" height="5.2" rx="0.6" fill="#3f6184"></rect><path d="M150.39999999999998,513.5 v-2 a2.2,2.2 0 0 1 4.4,0 v0.2" fill="none" stroke="#3f6184" stroke-width="1"></path><line x1="18" y1="509.2" x2="18" y2="519.8" stroke="#f0f0f0" stroke-width="0.5"></line><line x1="42.5" y1="509.2" x2="42.5" y2="519.8" stroke="#f0f0f0" stroke-width="0.5"></line><line x1="113.9" y1="509.2" x2="113.9" y2="519.8" stroke="#f0f0f0" stroke-width="0.5"></line><line x1="129.3" y1="509.2" x2="129.3" y2="519.8" stroke="#f0f0f0" stroke-width="0.5"></line><line x1="144" y1="509.2" x2="144" y2="519.8" stroke="#f0f0f0" stroke-width="0.5"></line><line x1="0" y1="519.8" x2="160" y2="519.8" stroke="#f2f2f2" stroke-width="0.5"></line><path d="M5.8,522.83 L8.1,525.13 L5.8,527.43" fill="none" stroke="#333" stroke-width="1"></path><rect x="27.5" y="522.53" width="5.2" height="5.2" fill="#fff" stroke="#555" stroke-width="0.6"></rect><path d="M117.3,525.13 Q121.6,521.83 125.89999999999999,525.13 Q121.6,528.43 117.3,525.13 Z" fill="#eee" stroke="#aaa" stroke-width="0.5"></path><circle cx="121.6" cy="525.13" r="1.8" fill="#c4c4c4"></circle><path d="M118.1,522.13 L125.1,528.13" stroke="#999" stroke-width="0.7"></path><path d="M137.2,520.83 L141.0,522.98 L141.0,527.28 L137.2,529.43 L133.39999999999998,527.28 L133.39999999999998,522.98 Z" fill="#46688f"></path><path d="M135.39999999999998,524.33 L137.2,523.23 L139.0,524.33 L139.0,526.13 L137.2,527.13 L135.39999999999998,526.13 Z" fill="none" stroke="#c9d6e6" stroke-width="0.6"></path><rect x="148.7" y="524.13" width="8" height="5.2" rx="0.6" fill="#3f6184"></rect><path d="M150.39999999999998,524.13 v-2 a2.2,2.2 0 0 1 4.4,0 v0.2" fill="none" stroke="#3f6184" stroke-width="1"></path><line x1="18" y1="519.83" x2="18" y2="530.43" stroke="#f0f0f0" stroke-width="0.5"></line><line x1="42.5" y1="519.83" x2="42.5" y2="530.43" stroke="#f0f0f0" stroke-width="0.5"></line><line x1="113.9" y1="519.83" x2="113.9" y2="530.43" stroke="#f0f0f0" stroke-width="0.5"></line><line x1="129.3" y1="519.83" x2="129.3" y2="530.43" stroke="#f0f0f0" stroke-width="0.5"></line><line x1="144" y1="519.83" x2="144" y2="530.43" stroke="#f0f0f0" stroke-width="0.5"></line><line x1="0" y1="530.43" x2="160" y2="530.43" stroke="#f2f2f2" stroke-width="0.5"></line><line x1="165.2" y1="424.5" x2="165.2" y2="531" stroke="#8a8a8a" stroke-width="1"></line></svg><!--END_PANELS_C-->
<div class="a" style="left:174px;top:87px;width:850px;height:11px;background:#dedede"></div>
<div class="t" style="left: 176px; top: 88px; font-size: 7.5px; transform: scaleX(0.812); transform-origin: left center;">Work area</div>
<div class="a" style="left:174px;top:98px;width:850px;height:14px;background:#f5f5f5"></div>
<div class="a" style="left:174px;top:112px;width:850px;height:428px;background:#fff"></div>
<!--WORK_C--><svg style="left:0;top:0" width="1024" height="550"><defs><clipPath id="wa"><rect x="174" y="112" width="850" height="428"></rect></clipPath><clipPath id="gridclip"><polygon points="174,240 308,112 1024,112 1024,540 174,540"></polygon></clipPath><pattern id="brick" width="4" height="3" patternUnits="userSpaceOnUse"><rect width="4" height="3" fill="#3b3b3b"></rect><path d="M0,2.5 h4 M2,0 v1.5" stroke="#555" stroke-width="0.5"></path></pattern></defs><g clip-path="url(#wa)"><g clip-path="url(#gridclip)" stroke="#ececec" stroke-width="0.6"><line x1="174" y1="672.0" x2="1024" y2="1238.4"></line><line x1="174" y1="655.9" x2="1024" y2="1222.3"></line><line x1="174" y1="639.7" x2="1024" y2="1206.1"></line><line x1="174" y1="623.6" x2="1024" y2="1190.0"></line><line x1="174" y1="607.5" x2="1024" y2="1173.9"></line><line x1="174" y1="591.3" x2="1024" y2="1157.8"></line><line x1="174" y1="575.2" x2="1024" y2="1141.6"></line><line x1="174" y1="559.1" x2="1024" y2="1125.5"></line><line x1="174" y1="542.9" x2="1024" y2="1109.4"></line><line x1="174" y1="526.8" x2="1024" y2="1093.2"></line><line x1="174" y1="510.7" x2="1024" y2="1077.1"></line><line x1="174" y1="494.6" x2="1024" y2="1061.0"></line><line x1="174" y1="478.4" x2="1024" y2="1044.8"></line><line x1="174" y1="462.3" x2="1024" y2="1028.7"></line><line x1="174" y1="446.2" x2="1024" y2="1012.6"></line><line x1="174" y1="430.0" x2="1024" y2="996.5"></line><line x1="174" y1="413.9" x2="1024" y2="980.3"></line><line x1="174" y1="397.8" x2="1024" y2="964.2"></line><line x1="174" y1="381.6" x2="1024" y2="948.1"></line><line x1="174" y1="365.5" x2="1024" y2="931.9"></line><line x1="174" y1="349.4" x2="1024" y2="915.8"></line><line x1="174" y1="333.3" x2="1024" y2="899.7"></line><line x1="174" y1="317.1" x2="1024" y2="883.5"></line><line x1="174" y1="301.0" x2="1024" y2="867.4"></line><line x1="174" y1="284.9" x2="1024" y2="851.3"></line><line x1="174" y1="268.7" x2="1024" y2="835.1"></line><line x1="174" y1="252.6" x2="1024" y2="819.0"></line><line x1="174" y1="236.5" x2="1024" y2="802.9"></line><line x1="174" y1="220.3" x2="1024" y2="786.8"></line><line x1="174" y1="204.2" x2="1024" y2="770.6"></line><line x1="174" y1="188.1" x2="1024" y2="754.5"></line><line x1="174" y1="171.9" x2="1024" y2="738.4"></line><line x1="174" y1="155.8" x2="1024" y2="722.2"></line><line x1="174" y1="139.7" x2="1024" y2="706.1"></line><line x1="174" y1="123.6" x2="1024" y2="690.0"></line><line x1="174" y1="107.4" x2="1024" y2="673.8"></line><line x1="174" y1="91.3" x2="1024" y2="657.7"></line><line x1="174" y1="75.2" x2="1024" y2="641.6"></line><line x1="174" y1="59.0" x2="1024" y2="625.5"></line><line x1="174" y1="42.9" x2="1024" y2="609.3"></line><line x1="174" y1="26.8" x2="1024" y2="593.2"></line><line x1="174" y1="10.6" x2="1024" y2="577.1"></line><line x1="174" y1="-5.5" x2="1024" y2="560.9"></line><line x1="174" y1="-21.6" x2="1024" y2="544.8"></line><line x1="174" y1="-37.7" x2="1024" y2="528.7"></line><line x1="174" y1="-53.9" x2="1024" y2="512.5"></line><line x1="174" y1="-70.0" x2="1024" y2="496.4"></line><line x1="174" y1="-86.1" x2="1024" y2="480.3"></line><line x1="174" y1="-102.3" x2="1024" y2="464.2"></line><line x1="174" y1="-118.4" x2="1024" y2="448.0"></line><line x1="174" y1="-134.5" x2="1024" y2="431.9"></line><line x1="174" y1="-150.7" x2="1024" y2="415.8"></line><line x1="174" y1="-166.8" x2="1024" y2="399.6"></line><line x1="174" y1="-182.9" x2="1024" y2="383.5"></line><line x1="174" y1="-199.0" x2="1024" y2="367.4"></line><line x1="174" y1="-215.2" x2="1024" y2="351.2"></line><line x1="174" y1="-231.3" x2="1024" y2="335.1"></line><line x1="174" y1="-247.4" x2="1024" y2="319.0"></line><line x1="174" y1="-263.6" x2="1024" y2="302.8"></line><line x1="174" y1="-279.7" x2="1024" y2="286.7"></line><line x1="174" y1="-295.8" x2="1024" y2="270.6"></line><line x1="174" y1="-312.0" x2="1024" y2="254.5"></line><line x1="174" y1="-328.1" x2="1024" y2="238.3"></line><line x1="174" y1="-344.2" x2="1024" y2="222.2"></line><line x1="174" y1="-360.4" x2="1024" y2="206.1"></line><line x1="174" y1="-376.5" x2="1024" y2="189.9"></line><line x1="174" y1="-392.6" x2="1024" y2="173.8"></line><line x1="174" y1="-408.7" x2="1024" y2="157.7"></line><line x1="174" y1="-424.9" x2="1024" y2="141.5"></line><line x1="174" y1="-441.0" x2="1024" y2="125.4"></line><line x1="174" y1="-457.1" x2="1024" y2="109.3"></line><line x1="174" y1="-473.3" x2="1024" y2="93.2"></line><line x1="174" y1="-489.4" x2="1024" y2="77.0"></line><line x1="174" y1="-505.5" x2="1024" y2="60.9"></line><line x1="174" y1="-521.7" x2="1024" y2="44.8"></line><line x1="174" y1="-537.8" x2="1024" y2="28.6"></line><line x1="174" y1="-553.9" x2="1024" y2="12.5"></line><line x1="174" y1="-570.0" x2="1024" y2="-3.6"></line><line x1="174" y1="-586.2" x2="1024" y2="-19.8"></line><line x1="174" y1="-602.3" x2="1024" y2="-35.9"></line><line x1="174" y1="-618.4" x2="1024" y2="-52.0"></line><line x1="174" y1="-634.6" x2="1024" y2="-68.1"></line><line x1="174" y1="-650.7" x2="1024" y2="-84.3"></line><line x1="174" y1="-666.8" x2="1024" y2="-100.4"></line><line x1="174" y1="-683.0" x2="1024" y2="-116.5"></line><line x1="174" y1="-699.1" x2="1024" y2="-132.7"></line><line x1="174" y1="-715.2" x2="1024" y2="-148.8"></line><line x1="174" y1="-731.3" x2="1024" y2="-164.9"></line><line x1="174" y1="-747.5" x2="1024" y2="-181.1"></line><line x1="174" y1="-763.6" x2="1024" y2="-197.2"></line><line x1="174" y1="-779.7" x2="1024" y2="-213.3"></line><line x1="174" y1="-795.9" x2="1024" y2="-229.5"></line><line x1="174" y1="-812.0" x2="1024" y2="-245.6"></line><line x1="174" y1="-828.1" x2="1024" y2="-261.7"></line><line x1="174" y1="-844.3" x2="1024" y2="-277.8"></line><line x1="174" y1="-860.4" x2="1024" y2="-294.0"></line><line x1="174" y1="-876.5" x2="1024" y2="-310.1"></line><line x1="174" y1="-892.7" x2="1024" y2="-326.2"></line><line x1="174" y1="-908.8" x2="1024" y2="-342.4"></line><line x1="174" y1="-924.9" x2="1024" y2="-358.5"></line><line x1="-469.5" y1="112" x2="-953.4" y2="540"></line><line x1="-449.5" y1="112" x2="-933.3" y2="540"></line><line x1="-429.4" y1="112" x2="-913.2" y2="540"></line><line x1="-409.3" y1="112" x2="-893.1" y2="540"></line><line x1="-389.2" y1="112" x2="-873.1" y2="540"></line><line x1="-369.2" y1="112" x2="-853.0" y2="540"></line><line x1="-349.1" y1="112" x2="-832.9" y2="540"></line><line x1="-329.0" y1="112" x2="-812.8" y2="540"></line><line x1="-308.9" y1="112" x2="-792.8" y2="540"></line><line x1="-288.9" y1="112" x2="-772.7" y2="540"></line><line x1="-268.8" y1="112" x2="-752.6" y2="540"></line><line x1="-248.7" y1="112" x2="-732.5" y2="540"></line><line x1="-228.6" y1="112" x2="-712.5" y2="540"></line><line x1="-208.6" y1="112" x2="-692.4" y2="540"></line><line x1="-188.5" y1="112" x2="-672.3" y2="540"></line><line x1="-168.4" y1="112" x2="-652.2" y2="540"></line><line x1="-148.3" y1="112" x2="-632.2" y2="540"></line><line x1="-128.3" y1="112" x2="-612.1" y2="540"></line><line x1="-108.2" y1="112" x2="-592.0" y2="540"></line><line x1="-88.1" y1="112" x2="-571.9" y2="540"></line><line x1="-68.0" y1="112" x2="-551.9" y2="540"></line><line x1="-48.0" y1="112" x2="-531.8" y2="540"></line><line x1="-27.9" y1="112" x2="-511.7" y2="540"></line><line x1="-7.8" y1="112" x2="-491.6" y2="540"></line><line x1="12.3" y1="112" x2="-471.6" y2="540"></line><line x1="32.3" y1="112" x2="-451.5" y2="540"></line><line x1="52.4" y1="112" x2="-431.4" y2="540"></line><line x1="72.5" y1="112" x2="-411.3" y2="540"></line><line x1="92.6" y1="112" x2="-391.3" y2="540"></line><line x1="112.6" y1="112" x2="-371.2" y2="540"></line><line x1="132.7" y1="112" x2="-351.1" y2="540"></line><line x1="152.8" y1="112" x2="-331.0" y2="540"></line><line x1="172.9" y1="112" x2="-311.0" y2="540"></line><line x1="192.9" y1="112" x2="-290.9" y2="540"></line><line x1="213.0" y1="112" x2="-270.8" y2="540"></line><line x1="233.1" y1="112" x2="-250.7" y2="540"></line><line x1="253.2" y1="112" x2="-230.7" y2="540"></line><line x1="273.2" y1="112" x2="-210.6" y2="540"></line><line x1="293.3" y1="112" x2="-190.5" y2="540"></line><line x1="313.4" y1="112" x2="-170.4" y2="540"></line><line x1="333.5" y1="112" x2="-150.4" y2="540"></line><line x1="353.5" y1="112" x2="-130.3" y2="540"></line><line x1="373.6" y1="112" x2="-110.2" y2="540"></line><line x1="393.7" y1="112" x2="-90.1" y2="540"></line><line x1="413.8" y1="112" x2="-70.1" y2="540"></line><line x1="433.8" y1="112" x2="-50.0" y2="540"></line><line x1="453.9" y1="112" x2="-29.9" y2="540"></line><line x1="474.0" y1="112" x2="-9.8" y2="540"></line><line x1="494.1" y1="112" x2="10.2" y2="540"></line><line x1="514.1" y1="112" x2="30.3" y2="540"></line><line x1="534.2" y1="112" x2="50.4" y2="540"></line><line x1="554.3" y1="112" x2="70.5" y2="540"></line><line x1="574.4" y1="112" x2="90.5" y2="540"></line><line x1="594.4" y1="112" x2="110.6" y2="540"></line><line x1="614.5" y1="112" x2="130.7" y2="540"></line><line x1="634.6" y1="112" x2="150.8" y2="540"></line><line x1="654.7" y1="112" x2="170.8" y2="540"></line><line x1="674.7" y1="112" x2="190.9" y2="540"></line><line x1="694.8" y1="112" x2="211.0" y2="540"></line><line x1="714.9" y1="112" x2="231.1" y2="540"></line><line x1="735.0" y1="112" x2="251.1" y2="540"></line><line x1="755.0" y1="112" x2="271.2" y2="540"></line><line x1="775.1" y1="112" x2="291.3" y2="540"></line><line x1="795.2" y1="112" x2="311.4" y2="540"></line><line x1="815.3" y1="112" x2="331.4" y2="540"></line><line x1="835.3" y1="112" x2="351.5" y2="540"></line><line x1="855.4" y1="112" x2="371.6" y2="540"></line><line x1="875.5" y1="112" x2="391.7" y2="540"></line><line x1="895.6" y1="112" x2="411.7" y2="540"></line><line x1="915.6" y1="112" x2="431.8" y2="540"></line><line x1="935.7" y1="112" x2="451.9" y2="540"></line><line x1="955.8" y1="112" x2="472.0" y2="540"></line><line x1="975.9" y1="112" x2="492.0" y2="540"></line><line x1="995.9" y1="112" x2="512.1" y2="540"></line><line x1="1016.0" y1="112" x2="532.2" y2="540"></line><line x1="1036.1" y1="112" x2="552.3" y2="540"></line><line x1="1056.2" y1="112" x2="572.3" y2="540"></line><line x1="1076.2" y1="112" x2="592.4" y2="540"></line><line x1="1096.3" y1="112" x2="612.5" y2="540"></line><line x1="1116.4" y1="112" x2="632.6" y2="540"></line><line x1="1136.5" y1="112" x2="652.6" y2="540"></line><line x1="1156.5" y1="112" x2="672.7" y2="540"></line><line x1="1176.6" y1="112" x2="692.8" y2="540"></line><line x1="1196.7" y1="112" x2="712.9" y2="540"></line><line x1="1216.8" y1="112" x2="732.9" y2="540"></line><line x1="1236.9" y1="112" x2="753.0" y2="540"></line><line x1="1256.9" y1="112" x2="773.1" y2="540"></line><line x1="1277.0" y1="112" x2="793.2" y2="540"></line><line x1="1297.1" y1="112" x2="813.2" y2="540"></line><line x1="1317.2" y1="112" x2="833.3" y2="540"></line><line x1="1337.2" y1="112" x2="853.4" y2="540"></line><line x1="1357.3" y1="112" x2="873.5" y2="540"></line><line x1="1377.4" y1="112" x2="893.6" y2="540"></line><line x1="1397.5" y1="112" x2="913.6" y2="540"></line><line x1="1417.5" y1="112" x2="933.7" y2="540"></line><line x1="1437.6" y1="112" x2="953.8" y2="540"></line><line x1="1457.7" y1="112" x2="973.9" y2="540"></line><line x1="1477.8" y1="112" x2="993.9" y2="540"></line><line x1="1497.8" y1="112" x2="1014.0" y2="540"></line><line x1="1517.9" y1="112" x2="1034.1" y2="540"></line><line x1="1538.0" y1="112" x2="1054.2" y2="540"></line><line x1="1558.1" y1="112" x2="1074.2" y2="540"></line><line x1="1578.1" y1="112" x2="1094.3" y2="540"></line><line x1="1598.2" y1="112" x2="1114.4" y2="540"></line><line x1="1618.3" y1="112" x2="1134.5" y2="540"></line><line x1="1638.4" y1="112" x2="1154.5" y2="540"></line><line x1="1658.4" y1="112" x2="1174.6" y2="540"></line><line x1="1678.5" y1="112" x2="1194.7" y2="540"></line><line x1="1698.6" y1="112" x2="1214.8" y2="540"></line><line x1="1718.7" y1="112" x2="1234.8" y2="540"></line></g></g><line x1="766.2" y1="111.6" x2="1024.0" y2="273.6" stroke="#f6b3b3" stroke-width="0.8"></line><line x1="860.0" y1="537.3" x2="1024.0" y2="390.0" stroke="#8fe88f" stroke-width="0.9"></line><polygon points="646.2,197.0 799.0,216.3 766.0,362.4 612.0,342.7" fill="rgba(113,113,113,0.25)" stroke="none" stroke-width="0.6" stroke-linejoin="round"></polygon><polygon points="400.0,138.0 466.0,173.6 496.0,192.0 533.0,158.0 632.0,224.0 679.0,177.0 731.0,209.0 722.0,230.0 781.0,268.0 781.0,272.0 738.0,298.0 738.0,330.0 713.0,347.0 700.0,340.0 695.0,353.0 672.0,370.0 675.0,347.0 514.6,499.0 443.2,460.0 443.2,457.7 472.0,430.0 492.5,410.7 473.0,399.8 472.0,404.7 409.6,367.8 405.8,353.8 374.2,354.3 320.2,191.5" fill="#a9a9a9" stroke="#7a7a7a" stroke-width="0.6" stroke-linejoin="round"></polygon><polygon points="319.9,192.1 322.4,192.1 354.3,273.2 375.0,322.3 375.0,352.0 374.2,355.0 346.0,278.0 320.5,218.0" fill="#8e8e8e" stroke="#666" stroke-width="0.5" stroke-linejoin="round"></polygon><polygon points="331.4,225.7 335.5,224.0 350.2,270.0 359.5,293.0 359.5,317.0 355.0,303.0 342.0,273.2" fill="#707070" stroke="none" stroke-width="0.6" stroke-linejoin="round"></polygon><polyline points="322.0,200.0 322.0,217.0 347.0,280.0 373.0,352.0" fill="none" stroke="#c0c0c0" stroke-width="0.7" stroke-linejoin="round" stroke-dasharray="1.2,4"></polyline><line x1="359.5" y1="293.0" x2="359.5" y2="318.0" stroke="#3a3a3a" stroke-width="0.9"></line><polygon points="374.2,323.2 404.5,318.3 405.3,348.6 374.2,353.5" fill="#cfcfcf" stroke="#777" stroke-width="0.6" stroke-linejoin="round"></polygon><polygon points="380.0,329.0 403.7,326.0 403.7,350.0 380.0,352.0" fill="#8f92c6" stroke="#555" stroke-width="0.6" stroke-linejoin="round"></polygon><polygon points="376.0,324.0 403.7,319.5 403.7,325.5 376.0,329.0" fill="#e2e2e2" stroke="none" stroke-width="0.6" stroke-linejoin="round"></polygon><polygon points="404.5,318.3 410.2,332.2 410.0,360.0 405.3,353.8" fill="#9a9a9a" stroke="#777" stroke-width="0.5" stroke-linejoin="round"></polygon><polygon points="410.2,332.2 487.3,379.0 472.0,404.7 409.6,367.8" fill="#b6b6b6" stroke="#7a7a7a" stroke-width="0.5" stroke-linejoin="round"></polygon><polygon points="425.0,349.5 434.3,355.0 434.3,377.5 425.0,372.0" fill="#c39a9c" stroke="#7a5a5a" stroke-width="0.5" stroke-linejoin="round"></polygon><polygon points="450.0,365.0 475.8,380.5 475.8,396.0 450.0,380.5" fill="#c39a9c" stroke="#7a5a5a" stroke-width="0.5" stroke-linejoin="round"></polygon><line x1="463.0" y1="372.5" x2="463.0" y2="388.5" stroke="#8a6a6a" stroke-width="0.5"></line><polygon points="409.6,364.5 472.0,401.5 472.0,404.7 409.6,367.8" fill="#8e8e8e" stroke="none" stroke-width="0.6" stroke-linejoin="round"></polygon><polyline points="412.0,366.0 470.0,400.5" fill="none" stroke="#d8c89a" stroke-width="0.6" stroke-linejoin="round" stroke-dasharray="2,3"></polyline><polygon points="422.4,327.0 448.0,304.0 537.8,326.4 523.0,341.0 489.8,369.0" fill="#a9a9a9" stroke="none" stroke-width="0.6" stroke-linejoin="round"></polygon><polygon points="422.4,327.0 489.8,369.0 489.8,379.0 422.4,337.0" fill="#a9b2c6" stroke="#9d9666" stroke-width="1.1" stroke-linejoin="round"></polygon><polygon points="489.8,369.0 523.0,341.0 537.0,330.0 537.0,340.0 523.0,351.0 489.8,379.0" fill="#a9b2c6" stroke="#9d9666" stroke-width="1.1" stroke-linejoin="round"></polygon><polygon points="422.4,327.0 448.0,304.0 448.0,312.0 422.4,337.0" fill="#a9b2c6" stroke="#9d9666" stroke-width="1.1" stroke-linejoin="round"></polygon><line x1="438.0" y1="336.7" x2="438.0" y2="346.7" stroke="#9d9666" stroke-width="1.1"></line><line x1="455.0" y1="347.3" x2="455.0" y2="357.3" stroke="#9d9666" stroke-width="1.1"></line><line x1="472.0" y1="357.9" x2="472.0" y2="367.9" stroke="#9d9666" stroke-width="1.1"></line><line x1="505.0" y1="356.2" x2="505.0" y2="366.2" stroke="#9d9666" stroke-width="1.1"></line><line x1="520.0" y1="343.6" x2="520.0" y2="353.6" stroke="#9d9666" stroke-width="1.1"></line><polygon points="512.7,214.2 597.8,268.0 597.8,271.0 516.0,346.8 429.8,292.5 429.8,289.5" fill="#8a8a8a" stroke="none" stroke-width="0.6" stroke-linejoin="round"></polygon><polygon points="512.7,214.2 597.8,268.0 516.0,343.8 429.8,289.5" fill="#acaba9" stroke="#6f6f6f" stroke-width="0.6" stroke-linejoin="round"></polygon><polygon points="529.0,338.0 541.0,330.0 541.0,352.0 529.0,360.0" fill="#c4c4c4" stroke="#888" stroke-width="0.4" stroke-linejoin="round"></polygon><polyline points="486.0,236.0 463.6,221.0 533.0,158.0 632.0,224.4" fill="none" stroke="#dcdcdc" stroke-width="2.2" stroke-linejoin="round"></polyline><polyline points="486.0,240.0 463.6,224.0 533.0,161.5 630.0,227.0" fill="none" stroke="#777" stroke-width="0.5" stroke-linejoin="round"></polyline><polyline points="486.0,233.0 466.5,220.5 533.0,155.5 634.0,222.0" fill="none" stroke="#888" stroke-width="0.5" stroke-linejoin="round"></polyline><polygon points="701.5,300.6 715.7,305.0 738.0,296.0 738.0,330.0 713.5,347.5 700.4,340.0" fill="#d2d2d2" stroke="#7f7f7f" stroke-width="0.5" stroke-linejoin="round"></polygon><polygon points="701.5,300.6 715.7,305.0 713.5,347.5 700.4,340.0" fill="#c4c4c4" stroke="#7f7f7f" stroke-width="0.5" stroke-linejoin="round"></polygon><polyline points="700.0,299.0 716.0,303.5 738.0,294.0" fill="none" stroke="#e8e8e8" stroke-width="1.2" stroke-linejoin="round"></polyline><polygon points="703.0,318.0 710.5,320.5 710.5,330.0 703.0,327.5" fill="#3d4a48" stroke="none" stroke-width="0.6" stroke-linejoin="round"></polygon><polygon points="704.5,320.0 707.0,321.0 707.0,325.0 704.5,324.0" fill="#4fa08a" stroke="none" stroke-width="0.6" stroke-linejoin="round"></polygon><polygon points="700.4,336.0 713.5,343.5 738.0,326.0 738.0,330.0 713.5,347.5 700.4,340.0" fill="#8e8e8e" stroke="none" stroke-width="0.6" stroke-linejoin="round"></polygon><polygon points="724.0,326.0 737.0,318.0 737.0,330.0 724.0,337.0" fill="#e6e6e6" stroke="#999" stroke-width="0.4" stroke-linejoin="round"></polygon><polygon points="636.0,225.0 679.0,181.0 727.0,210.0 684.0,252.0" fill="#a0a0a0" stroke="none" stroke-width="0.6" stroke-linejoin="round"></polygon><polygon points="729.6,211.0 732.0,213.0 732.0,227.5 712.6,231.0 689.4,249.4 684.0,256.0 684.0,253.0" fill="#b9b9b9" stroke="#7a7a7a" stroke-width="0.4" stroke-linejoin="round"></polygon><line x1="723.3" y1="223.3" x2="724.8" y2="223.3" stroke="#555" stroke-width="0.7"></line><line x1="716.5" y1="229.6" x2="718.0" y2="229.6" stroke="#555" stroke-width="0.7"></line><line x1="709.7" y1="235.9" x2="711.2" y2="235.9" stroke="#555" stroke-width="0.7"></line><line x1="702.9" y1="242.2" x2="704.4" y2="242.2" stroke="#555" stroke-width="0.7"></line><line x1="696.1" y1="248.5" x2="697.6" y2="248.5" stroke="#555" stroke-width="0.7"></line><polygon points="712.6,231.0 780.6,266.4 780.6,270.5 723.4,318.0 723.4,314.3 735.7,292.7 734.2,288.0 689.4,256.0 689.4,249.4" fill="#9d9d9d" stroke="#6f6f6f" stroke-width="0.5" stroke-linejoin="round"></polygon><polygon points="745.0,291.0 752.0,287.0 752.0,296.0 745.0,300.0" fill="#9a9a9a" stroke="#777" stroke-width="0.4" stroke-linejoin="round"></polygon><polyline points="632.0,224.4 679.0,177.0 731.3,209.0 684.0,254.0 736.0,287.0 737.0,296.0 722.0,314.0" fill="none" stroke="#dcdcdc" stroke-width="2.2" stroke-linejoin="round"></polyline><polyline points="634.0,226.5 679.0,180.5 727.0,209.5 684.0,250.5 733.0,282.0" fill="none" stroke="#777" stroke-width="0.5" stroke-linejoin="round"></polyline><polyline points="630.0,222.0 679.0,174.5 734.0,208.0 688.0,254.0 739.0,285.5 740.0,297.0 724.0,317.0" fill="none" stroke="#888" stroke-width="0.5" stroke-linejoin="round"></polyline><line x1="732.2" y1="302.6" x2="733.7" y2="302.6" stroke="#555" stroke-width="0.7"></line><line x1="729.4" y1="306.2" x2="730.9" y2="306.2" stroke="#555" stroke-width="0.7"></line><line x1="726.6" y1="309.8" x2="728.1" y2="309.8" stroke="#555" stroke-width="0.7"></line><line x1="723.8" y1="313.4" x2="725.3" y2="313.4" stroke="#555" stroke-width="0.7"></line><polyline points="627.6,233.0 597.0,269.0" fill="none" stroke="#6f6f6f" stroke-width="0.5" stroke-linejoin="round"></polyline><polyline points="627.6,233.0 709.8,285.8" fill="none" stroke="#6f6f6f" stroke-width="0.5" stroke-linejoin="round"></polyline><polygon points="626.0,238.0 629.0,236.0 631.0,239.0 628.0,241.0" fill="none" stroke="#555" stroke-width="0.5" stroke-linejoin="round"></polygon><polygon points="600.0,353.3 634.7,324.0 649.3,333.5 615.6,364.7" fill="#9c9c9c" stroke="#666" stroke-width="0.5" stroke-linejoin="round"></polygon><polygon points="604.1,353.0 612.4,346.0 623.7,353.8 615.6,361.3" fill="#c9c9c9" stroke="none" stroke-width="0.6" stroke-linejoin="round"></polygon><polygon points="615.2,343.7 623.5,336.6 634.5,343.9 626.4,351.3" fill="#c9c9c9" stroke="none" stroke-width="0.6" stroke-linejoin="round"></polygon><polygon points="626.3,334.3 634.6,327.3 645.3,333.9 637.2,341.4" fill="#c9c9c9" stroke="none" stroke-width="0.6" stroke-linejoin="round"></polygon><polygon points="650.0,363.0 660.0,358.0 660.0,368.0 650.0,373.0" fill="#7fb07a" stroke="#555" stroke-width="0.4" stroke-linejoin="round"></polygon><polygon points="780.6,266.4 780.6,271.0 724.0,318.5 722.5,315.0" fill="#8d8d8d" stroke="#6a6a6a" stroke-width="0.4" stroke-linejoin="round"></polygon><polyline points="780.0,267.5 722.0,315.0" fill="none" stroke="#bdbdbd" stroke-width="0.6" stroke-linejoin="round"></polyline><polygon points="658.8,295.0 683.0,273.3 695.0,280.0 695.0,353.0 672.0,372.0 664.7,368.0 664.7,344.0 667.6,318.2 658.8,318.0" fill="url(#brick)" stroke="#222" stroke-width="0.5" stroke-linejoin="round"></polygon><polyline points="658.8,295.0 670.0,302.0 695.0,280.0" fill="none" stroke="#222" stroke-width="0.5" stroke-linejoin="round"></polyline><polygon points="670.0,302.0 695.0,280.0 695.0,353.0 672.0,372.0 668.0,370.0 668.0,318.0" fill="rgba(0,0,0,0.10)" stroke="none" stroke-width="0.6" stroke-linejoin="round"></polygon><polygon points="612.3,373.4 667.6,318.2 676.3,344.3 644.3,360.3" fill="#a9a9a9" stroke="none" stroke-width="0.6" stroke-linejoin="round"></polygon><polygon points="537.8,326.4 612.3,373.4 667.6,318.2 667.6,321.5 612.3,377.0 537.8,329.8" fill="#8f8f8f" stroke="#6a6a6a" stroke-width="0.4" stroke-linejoin="round"></polygon><polygon points="644.3,360.3 676.3,344.3 676.3,348.0 644.3,364.0" fill="#9a9a9a" stroke="#6a6a6a" stroke-width="0.4" stroke-linejoin="round"></polygon><clipPath id="massclip"><polygon points="400.0,138.0 466.0,173.6 496.0,192.0 533.0,158.0 632.0,224.0 679.0,177.0 731.0,209.0 722.0,230.0 781.0,268.0 781.0,272.0 738.0,298.0 738.0,330.0 713.0,347.0 700.0,340.0 695.0,353.0 672.0,370.0 675.0,347.0 514.6,499.0 443.2,460.0 443.2,457.7 472.0,430.0 492.5,410.7 473.0,399.8 472.0,404.7 409.6,367.8 405.8,353.8 374.2,354.3 320.2,191.5" fill="#000" stroke="none" stroke-width="0.6" stroke-linejoin="round"></polygon></clipPath><g clip-path="url(#massclip)"><polygon points="646.2,197.0 799.0,216.3 766.0,362.4 612.0,342.7" fill="rgba(60,60,60,0.10)" stroke="none" stroke-width="0.6" stroke-linejoin="round"></polygon></g><polygon points="443.2,457.7 472.0,430.0 492.5,410.7 473.0,399.8 475.0,398.0 490.0,380.0 530.0,342.0 545.0,348.0 640.0,381.0 564.7,450.0 507.7,498.6" fill="#aaaaaa" stroke="none" stroke-width="0.6" stroke-linejoin="round"></polygon><polygon points="473.0,399.8 492.5,410.7 472.0,429.3" fill="#bbbbbb" stroke="#888" stroke-width="0.4" stroke-linejoin="round"></polygon><polyline points="443.2,457.7 507.7,498.6 640.0,381.3" fill="none" stroke="#7a7a7a" stroke-width="0.7" stroke-linejoin="round"></polyline><polyline points="443.2,460.0 507.7,501.0 640.0,383.5" fill="none" stroke="#999" stroke-width="1.4" stroke-linejoin="round"></polyline><polygon points="456.8,468.6 501.4,497.7 515.9,492.0 515.9,515.9 501.4,518.6 456.8,492.3" fill="url(#brick)" stroke="#222" stroke-width="0.4" stroke-linejoin="round"></polygon><polygon points="501.4,499.0 515.9,492.0 515.9,515.9 501.4,518.6" fill="rgba(0,0,0,0.25)" stroke="none" stroke-width="0.6" stroke-linejoin="round"></polygon><polygon points="456.8,452.3 472.3,439.5 515.9,467.7 515.9,471.5 501.4,490.5 456.8,456.5" fill="#333" stroke="#1e1e1e" stroke-width="0.5" stroke-linejoin="round"></polygon><polygon points="462.3,455.0 473.2,445.0 511.4,468.6 500.5,481.4" fill="#575757" stroke="none" stroke-width="0.6" stroke-linejoin="round"></polygon><polygon points="487.0,461.5 508.0,472.5 501.0,478.5 480.0,467.5" fill="#c4c4c4" stroke="none" stroke-width="0.6" stroke-linejoin="round"></polygon><polygon points="467.0,453.0 471.5,448.5 473.0,456.0" fill="#c5c5c5" stroke="none" stroke-width="0.6" stroke-linejoin="round"></polygon><polygon points="638.0,512.0 642.4,526.5 678.0,546.0 692.0,546.0 787.4,456.7 792.6,442.2 684.6,538.4" fill="#4e4e4e" stroke="none" stroke-width="0.6" stroke-linejoin="round"></polygon><line x1="776.4" y1="456.6" x2="773.4" y2="469.6" stroke="#6a6a6a" stroke-width="0.5"></line><line x1="760.2" y1="471.1" x2="757.2" y2="484.1" stroke="#6a6a6a" stroke-width="0.5"></line><line x1="744.0" y1="485.5" x2="741.0" y2="498.5" stroke="#6a6a6a" stroke-width="0.5"></line><line x1="727.8" y1="499.9" x2="724.8" y2="512.9" stroke="#6a6a6a" stroke-width="0.5"></line><line x1="711.6" y1="514.4" x2="708.6" y2="527.4" stroke="#6a6a6a" stroke-width="0.5"></line><line x1="695.4" y1="528.8" x2="692.4" y2="541.8" stroke="#6a6a6a" stroke-width="0.5"></line><polyline points="790.0,449.0 688.0,540.0" fill="none" stroke="#6a6a6a" stroke-width="0.5" stroke-linejoin="round"></polyline><polyline points="640.0,519.0 662.0,532.0" fill="none" stroke="#6a6a6a" stroke-width="0.5" stroke-linejoin="round"></polyline><polygon points="638.0,512.0 745.7,414.5 792.6,442.2 684.6,538.4" fill="#8a8a8a" stroke="#555" stroke-width="0.5" stroke-linejoin="round"></polygon><polygon points="645.0,512.0 746.5,419.0 785.5,443.5 683.3,535.7" fill="#0a80dc" stroke="#2a4a7a" stroke-width="0.5" stroke-linejoin="round"></polygon><line x1="766.0" y1="362.4" x2="799.0" y2="216.3" stroke="#1c9a4a" stroke-width="1.1"></line><polygon points="799.0,214.0 796.0,224.0 801.5,224.5" fill="#1c9a4a" stroke="none" stroke-width="0.6" stroke-linejoin="round"></polygon><line x1="766.0" y1="362.4" x2="620.0" y2="344.0" stroke="#e8158c" stroke-width="1.2"></line><polygon points="613.4,343.0 623.0,339.5 622.5,347.5" fill="#e8158c" stroke="none" stroke-width="0.6" stroke-linejoin="round"></polygon><line x1="646.2" y1="197.1" x2="649.5" y2="181.8" stroke="#333" stroke-width="0.6"></line><line x1="646.2" y1="197.1" x2="625.5" y2="194.9" stroke="#333" stroke-width="0.6"></line><line x1="798.9" y1="216.3" x2="802.8" y2="202.3" stroke="#333" stroke-width="0.6"></line><line x1="798.9" y1="216.3" x2="820.2" y2="220.6" stroke="#333" stroke-width="0.6"></line><line x1="763.0" y1="366.0" x2="760.0" y2="378.0" stroke="#333" stroke-width="0.6"></line><line x1="766.0" y1="362.4" x2="785.0" y2="366.0" stroke="#333" stroke-width="0.6"></line><line x1="612.0" y1="342.7" x2="592.4" y2="339.5" stroke="#333" stroke-width="0.6"></line><line x1="612.0" y1="342.7" x2="609.8" y2="358.0" stroke="#333" stroke-width="0.6"></line><line x1="762.0" y1="205.0" x2="790.0" y2="223.0" stroke="#c4b07a" stroke-width="0.7"></line><line x1="765.0" y1="223.0" x2="787.0" y2="205.0" stroke="#c4b07a" stroke-width="0.7"></line><circle cx="612" cy="342.7" r="1.3" fill="#d8a020"></circle><line x1="225.7" y1="507.9" x2="225.7" y2="492.0" stroke="#1a1ae0" stroke-width="1.3"></line><polygon points="225.7,488.8 223.3,494.0 228.1,494.0" fill="#1a1ae0" stroke="none" stroke-width="0.6" stroke-linejoin="round"></polygon><line x1="225.7" y1="507.9" x2="207.0" y2="496.5" stroke="#d01818" stroke-width="1.3"></line><polygon points="203.0,493.7 206.0,499.5 209.0,495.0" fill="#d01818" stroke="none" stroke-width="0.6" stroke-linejoin="round"></polygon><line x1="225.7" y1="507.9" x2="209.0" y2="522.5" stroke="#20c020" stroke-width="1.3"></line><polygon points="206.1,525.4 208.0,519.5 211.5,523.5" fill="#20c020" stroke="none" stroke-width="0.6" stroke-linejoin="round"></polygon></svg><svg style="left:0;top:0" width="1024" height="115"><path d="M896,105 v-3.6 M896,105 l-3.6,3.3 M896,105 l3.6,3.3" stroke="#6a9ab8" stroke-width="1"></path><path d="M905.5,103.5 l2,-2 h5 v5.5 l-2,2 h-5 z" fill="#a9cbe0" stroke="#333" stroke-width="0.6"></path><path d="M905.5,103.5 h5 v5.5 M910.5,103.5 l2,-2" fill="none" stroke="#333" stroke-width="0.5"></path><ellipse cx="921.3" cy="105.5" rx="4.2" ry="1.8" fill="none" stroke="#222" stroke-width="0.7"></ellipse><circle cx="921.3" cy="104.2" r="2.3" fill="#111"></circle><ellipse cx="934.2" cy="106.3" rx="4.2" ry="1.8" fill="none" stroke="#222" stroke-width="0.7"></ellipse><path d="M934.2,101.5 v6 M932.5,103 l1.7,-1.5 l1.7,1.5" fill="none" stroke="#222" stroke-width="0.6"></path><circle cx="934.2" cy="103.5" r="1.1" fill="none" stroke="#222" stroke-width="0.5"></circle><line x1="942.7" y1="100.5" x2="942.7" y2="110" stroke="#ccc" stroke-width="0.6"></line><line x1="1009.2" y1="100.5" x2="1009.2" y2="110" stroke="#ccc" stroke-width="0.6"></line><rect x="947" y="101.5" width="3.6" height="7.5" fill="#a9cbe0" stroke="#333" stroke-width="0.5"></rect><rect x="950.6" y="101.5" width="3.6" height="7.5" fill="#f47a7a" stroke="#333" stroke-width="0.5"></rect><rect x="959.5" y="101.5" width="7.5" height="7.5" fill="#a9cbe0" stroke="#333" stroke-width="0.5"></rect><path d="M959.5,109 L967,101.5 L959.5,101.5 Z" fill="#3fd33f"></path><path d="M959,109.5 L967.5,101" stroke="#333" stroke-width="0.5"></path><rect x="972" y="101.5" width="7.8" height="7.5" fill="#a9cbe0" stroke="#333" stroke-width="0.5"></rect><rect x="972" y="101.5" width="7.8" height="2.7" fill="#9a8ae0"></rect><rect x="972" y="106.3" width="7.8" height="2.7" fill="#9a8ae0"></rect><path d="M972,105.2 h7.8" stroke="#333" stroke-width="0.5"></path><path d="M988.8,101.3 L993,103.3 L993,107.5 L988.8,109.5 L984.8,107.5 L984.8,103.3 Z" fill="#8fb8d0" stroke="#444" stroke-width="0.5"></path><path d="M984.8,103.3 L988.8,105.3 L993,103.3 M988.8,105.3 V109.5" stroke="#444" stroke-width="0.4" fill="none"></path><path d="M985.5,104 l3,1.5 v3 l-3,-1.5 z" fill="#e88"></path><path d="M989.5,105.5 l3,-1.5 v3 l-3,1.5 z" fill="#8d8"></path><path d="M997.2,105.3 Q1001.7,100.8 1006.3,105.3 Q1001.7,109.6 997.2,105.3 Z" fill="#111"></path><circle cx="1001.7" cy="105.2" r="1.3" fill="#fff"></circle><path d="M998,109 L1005.5,101" stroke="#111" stroke-width="0.7"></path><text x="1013.5" y="104.8" font-size="4.6" font-family="Liberation Sans" fill="#333">3D</text><ellipse cx="1017.5" cy="106.8" rx="3.3" ry="2.3" fill="none" stroke="#777" stroke-width="0.6"></ellipse></svg><div class="a" style="left:254.5px;top:135.5px;width:211.7px;height:56.3px;background:#f4f4f4;border:1px solid #bdbdbd;border-top:none"></div>
<div class="a" style="left:254.5px;top:135.5px;width:211.7px;height:10.6px;background:#a2a2a2"></div>
<div class="t" style="left: 334.2px; top: 136.5px; color: rgb(242, 242, 242); font-size: 6px; transform: scaleX(0.888); transform-origin: left center;">Coordinate entry</div>
<svg style="left:0;top:0" width="470" height="200"><path d="M456,139 l5,4.8 M461,139 l-5,4.8" stroke="#f4f4f4" stroke-width="0.9"></path></svg>
<div class="t" style="left: 260px; top: 149.7px; color: rgb(47, 92, 150); font-size: 5.5px; transform: scaleX(0.844); transform-origin: left center;">XY</div>
<div class="t" style="left: 272px; top: 149.7px; color: rgb(47, 92, 150); font-size: 5.5px; transform: scaleX(1.051); transform-origin: left center;">dxy</div>
<div class="a" style="left:283.4px;top:147.7px;width:12.4px;height:12.5px;background:#cde4f7;border:1px solid #90b9de"></div>
<div class="t" style="left: 287.3px; top: 149.4px; color: rgb(47, 92, 150); font-size: 6.5px; font-weight: bold; transform: scaleX(1.05); transform-origin: left center;">α</div>
<div class="t" style="left: 301px; top: 149.7px; color: rgb(47, 92, 150); font-size: 7px; transform: scaleX(1.051); transform-origin: left center;"><i><b>L</b></i></div>
<div class="t" style="left: 333.7px; top: 150.4px; color: rgb(51, 51, 51); font-size: 6.5px; transform: scaleX(0.829); transform-origin: left center;">X</div>
<div class="t" style="left: 377px; top: 150.4px; color: rgb(51, 51, 51); font-size: 6.5px; transform: scaleX(0.829); transform-origin: left center;">Y</div>
<div class="t" style="left: 419.3px; top: 150.4px; color: rgb(51, 51, 51); font-size: 6.5px; transform: scaleX(1.004); transform-origin: left center;">Z</div>
<div class="t" style="left: 256.9px; top: 163.4px; color: rgb(34, 34, 34); font-size: 7px; transform: scaleX(0.909); transform-origin: left center;">Last point</div>
<div class="a" style="left:318.5px;top:162.5px;width:32.8px;height:10.5px;background:#e8e8e8"></div>
<div class="t" style="left: 335px; top: 163.2px; color: rgb(138, 138, 138); font-size: 6.5px; transform: scaleX(0.86); transform-origin: left center;">22.79</div>
<div class="a" style="left:362.3px;top:162.5px;width:32.4px;height:10.5px;background:#e8e8e8"></div>
<div class="t" style="left: 379.3px; top: 163.2px; color: rgb(138, 138, 138); font-size: 6.5px; transform: scaleX(0.798); transform-origin: left center;">21.37</div>
<div class="a" style="left:406px;top:162.5px;width:32.0px;height:10.5px;background:#e8e8e8"></div>
<div class="t" style="left: 424.2px; top: 163.2px; color: rgb(138, 138, 138); font-size: 6.5px; transform: scaleX(0.909); transform-origin: left center;">0.00</div>
<div class="t" style="left: 441.5px; top: 163.9px; color: rgb(51, 51, 51); font-size: 6.5px; transform: scaleX(1.088); transform-origin: left center;">m</div>
<div class="a" style="left:450.5px;top:161.8px;width:14px;height:13.6px;background:#f7f7f7;border:1px solid #c2c2c2"></div>
<svg style="left:0;top:0" width="470" height="200"><path d="M455,166.5 q2.5,-2.5 5,0" fill="none" stroke="#3e6aa3" stroke-width="0.8"></path><path d="M454,165 l1.5,2.2 l1.5,-1.6 z" fill="#3e6aa3"></path><path d="M457.5,168 v4 M455.5,170 h4" stroke="#3e6aa3" stroke-width="0.8"></path></svg>
<div class="a" style="left:254.5px;top:176.6px;width:148.4px;height:14.7px;background:#f2ee6a"></div>
<div class="t" style="left: 256.9px; top: 179.2px; color: rgb(34, 34, 34); font-size: 7px; transform: scaleX(0.908); transform-origin: left center;">Coordinate</div>
<div class="t" style="left: 313.8px; top: 179.2px; color: rgb(34, 34, 34); font-size: 6.5px; transform: scaleX(0.828); transform-origin: left center;">L</div>
<div class="t" style="left: 355.5px; top: 179.7px; color: rgb(51, 51, 51); font-size: 6px; transform: scaleX(0.951); transform-origin: left center;">α</div>
<div class="t" style="left: 399px; top: 177.9px; color: rgb(51, 51, 51); font-size: 6px; transform: scaleX(1.039); transform-origin: left center;">°</div>
<div class="a" style="left:319px;top:177.7px;width:32.3px;height:11.7px;background:#ffff60;border-bottom:1px solid #b9b34a"></div>
<div class="t" style="left: 334.7px; top: 179px; color: rgb(34, 34, 34); font-size: 6.5px; transform: scaleX(0.921); transform-origin: left center;">10.00</div>
<div class="a" style="left:362.3px;top:177.7px;width:32.4px;height:11.7px;background:#ffff60;border-bottom:1px solid #b9b34a"></div>
<div class="t" style="left: 380.8px; top: 179px; color: rgb(34, 34, 34); font-size: 6.5px; transform: scaleX(0.909); transform-origin: left center;">30.0</div><!--END_WORK_C-->
<div class="a" style="left:0;top:540px;width:1024px;height:10px;background:#f3f3f3"></div>
<div class="t" style="left: 4px; top: 540px; transform: scaleX(0.893); transform-origin: left center;">Views - Create. Select three points to define a plane (these cannot be aligned).</div>
<!--RED_C--><svg style="left:0;top:0" width="1024" height="550"><path d="M879.6,26 C879.1,27.1 877.5,30.6 876.5,32.7 C875.5,34.8 874.8,36.5 873.6,38.5 C872.4,40.5 871.1,42.6 869.3,44.4 C867.5,46.2 865.0,47.9 862.7,49.5 C860.4,51.1 858.5,52.3 855.5,53.8 C852.5,55.2 848.8,56.9 844.5,58.2 C840.2,59.5 837.2,60.4 830.0,61.8 C822.8,63.2 812.7,65.2 801.0,66.8 C789.3,68.4 780.2,70.1 760.0,71.5 C739.8,72.9 706.7,73.8 680.0,75.0 C653.3,76.2 618.3,77.6 600.0,78.5 C581.7,79.4 582.3,79.2 570.0,80.5 C557.7,81.8 539.8,84.4 526.0,86.6 C512.2,88.8 500.0,90.3 487.0,93.4 C474.0,96.5 459.3,101.3 448.0,105.2 C436.7,109.1 427.8,113.4 419.0,117.0 C410.2,120.6 400.6,124.0 395.4,126.6 C390.2,129.2 389.2,131.5 388.0,132.5" fill="none" stroke="#cc1f2f" stroke-width="1.5"></path><polygon points="384.6,135.6 386.5,126.8 395,133.4" fill="#cc1f2f"></polygon></svg><!--END_RED_C-->
</body></html>
